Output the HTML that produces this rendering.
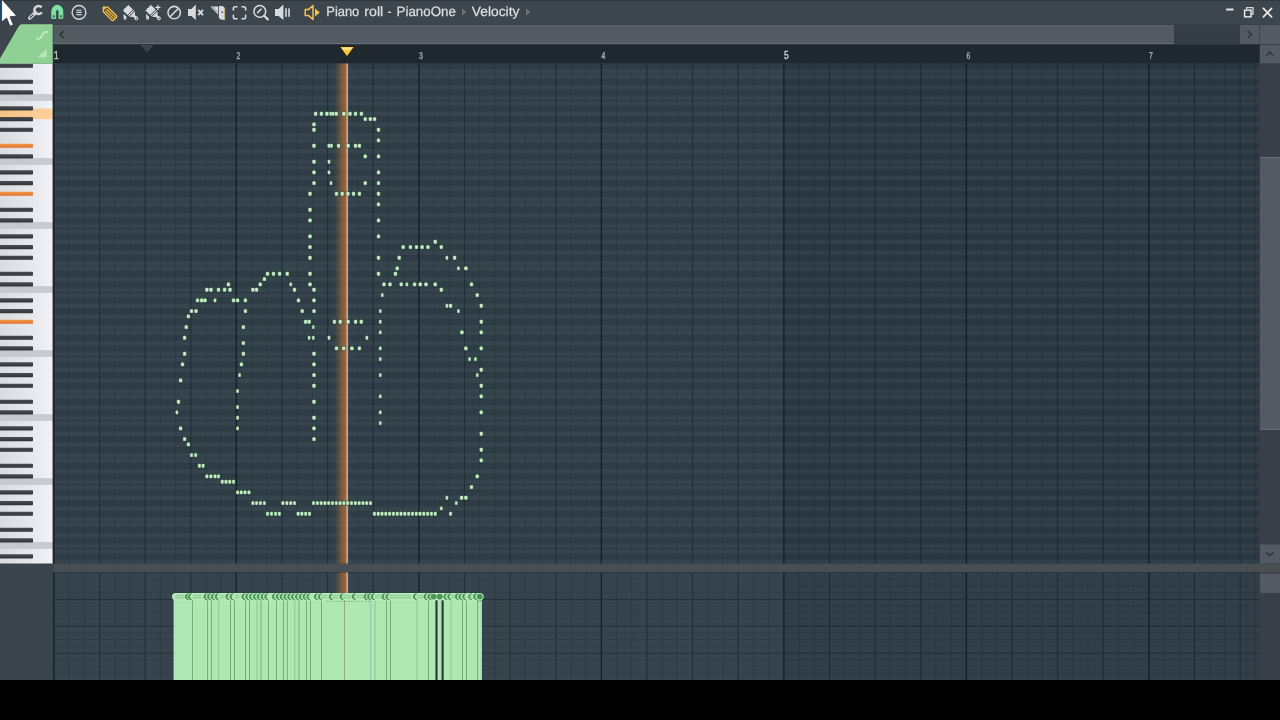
<!DOCTYPE html>
<html><head><meta charset="utf-8"><title>Piano roll - PianoOne</title>
<style>
html,body{margin:0;padding:0;background:#000;}
body{width:1280px;height:720px;position:relative;overflow:hidden;font-family:"Liberation Sans",sans-serif;}
svg{position:absolute;left:0;top:0;display:block;will-change:transform}
text{text-rendering:geometricPrecision}
.t{opacity:.999}
text{font-family:"Liberation Sans",sans-serif;}
</style></head><body>

<svg width="1280" height="720" viewBox="0 0 1280 720">
<defs>
<clipPath id="gc"><rect x="53.5" y="63.5" width="1206.0" height="500.0"/></clipPath>
<clipPath id="vc"><rect x="53.5" y="572.5" width="1206.0" height="107.5"/></clipPath>
<clipPath id="pc"><rect x="0" y="63.5" width="53.5" height="500.0"/></clipPath>
<linearGradient id="ph" x1="0" x2="1" y1="0" y2="0"><stop offset="0" stop-color="#a56a3c" stop-opacity="0"/><stop offset="0.15" stop-color="#a56a3c" stop-opacity="0.06"/><stop offset="0.42" stop-color="#a56a3c" stop-opacity="0.42"/><stop offset="0.6" stop-color="#a86a3a" stop-opacity="0.68"/><stop offset="0.88" stop-color="#b06c3a" stop-opacity="0.82"/><stop offset="0.895" stop-color="#d6a780" stop-opacity="1"/><stop offset="1" stop-color="#d6a780" stop-opacity="0.92"/></linearGradient>
<linearGradient id="wk" x1="0" x2="1" y1="0" y2="0"><stop offset="0" stop-color="#d9dbe0"/><stop offset="0.55" stop-color="#e6e7ec"/><stop offset="1" stop-color="#f2f3f7"/></linearGradient>
<linearGradient id="hk" x1="0" x2="1" y1="0" y2="0"><stop offset="0" stop-color="#f9c283"/><stop offset="1" stop-color="#fdd29c"/></linearGradient>
<linearGradient id="bk" x1="0" x2="0" y1="0" y2="1"><stop offset="0" stop-color="#4a4d52"/><stop offset="1" stop-color="#303338"/></linearGradient>
<linearGradient id="ok" x1="0" x2="0" y1="0" y2="1"><stop offset="0" stop-color="#f59a4a"/><stop offset="1" stop-color="#e0702a"/></linearGradient>
</defs>
<rect x="0" y="0" width="1280" height="680" fill="#3c444b"/>
<rect x="0" y="0" width="1280" height="24.5" fill="#3e464d"/>
<rect x="0" y="0" width="1280" height="1" fill="#2f363c"/>
<rect x="53.5" y="24.5" width="1227" height="20" fill="#353d44"/>
<rect x="0" y="24.5" width="53.5" height="39" fill="#3d454c"/>
<rect x="53.5" y="25" width="1120.5" height="19" fill="#535a61"/>
<rect x="53.5" y="25" width="1120.5" height="1" fill="#5a6168"/>
<rect x="53.5" y="43" width="1120.5" height="1.2" fill="#656c73"/>
<rect x="1240" y="25" width="19.3" height="19" fill="#535a61"/>
<rect x="1260" y="25" width="20" height="19" fill="#535a61"/>
<rect x="1260" y="45" width="20" height="18.5" fill="#535a61"/>
<rect x="53.5" y="44.5" width="1206" height="19" fill="#1f282e"/>
<rect x="1260" y="63.5" width="20" height="500" fill="#383f46"/>
<rect x="1260" y="157" width="20" height="273" fill="#535a61"/>
<rect x="1260" y="157" width="20" height="1" fill="#646b72"/>
<rect x="1260" y="429" width="20" height="1" fill="#646b72"/>
<rect x="1260" y="544.5" width="20" height="19" fill="#535a61"/>
<rect x="53.5" y="563.5" width="1226.5" height="9" fill="#484e52"/>
<rect x="0" y="563.5" width="53.5" height="9" fill="#3d454c"/>
<rect x="0" y="572.5" width="53.5" height="107.5" fill="#3c444b"/>
<rect x="1260" y="572.5" width="20" height="107.5" fill="#383f46"/>
<rect x="1260" y="573.5" width="20" height="19.5" fill="#535a61"/>
<rect x="0" y="680" width="1280" height="40" fill="#000"/>
<g shape-rendering="crispEdges">
<rect x="53.5" y="63.5" width="1206.0" height="500.0" fill="#36454d"/>
<rect x="53.5" y="572.5" width="1206.0" height="107.5" fill="#36454d"/>
</g>
<g clip-path="url(#gc)">
<rect x="53.5" y="63.10" width="1206.0" height="5.33" fill="#2e3c45"/>
<rect x="53.5" y="79.10" width="1206.0" height="5.33" fill="#2e3c45"/>
<rect x="53.5" y="89.77" width="1206.0" height="5.33" fill="#2e3c45"/>
<rect x="53.5" y="105.77" width="1206.0" height="5.33" fill="#2e3c45"/>
<rect x="53.5" y="116.43" width="1206.0" height="5.33" fill="#2e3c45"/>
<rect x="53.5" y="127.10" width="1206.0" height="5.33" fill="#2e3c45"/>
<rect x="53.5" y="143.10" width="1206.0" height="5.33" fill="#2e3c45"/>
<rect x="53.5" y="153.77" width="1206.0" height="5.33" fill="#2e3c45"/>
<rect x="53.5" y="169.77" width="1206.0" height="5.33" fill="#2e3c45"/>
<rect x="53.5" y="180.43" width="1206.0" height="5.33" fill="#2e3c45"/>
<rect x="53.5" y="191.10" width="1206.0" height="5.33" fill="#2e3c45"/>
<rect x="53.5" y="207.10" width="1206.0" height="5.33" fill="#2e3c45"/>
<rect x="53.5" y="217.77" width="1206.0" height="5.33" fill="#2e3c45"/>
<rect x="53.5" y="233.77" width="1206.0" height="5.33" fill="#2e3c45"/>
<rect x="53.5" y="244.43" width="1206.0" height="5.33" fill="#2e3c45"/>
<rect x="53.5" y="255.10" width="1206.0" height="5.33" fill="#2e3c45"/>
<rect x="53.5" y="271.10" width="1206.0" height="5.33" fill="#2e3c45"/>
<rect x="53.5" y="281.77" width="1206.0" height="5.33" fill="#2e3c45"/>
<rect x="53.5" y="297.77" width="1206.0" height="5.33" fill="#2e3c45"/>
<rect x="53.5" y="308.43" width="1206.0" height="5.33" fill="#2e3c45"/>
<rect x="53.5" y="319.10" width="1206.0" height="5.33" fill="#2e3c45"/>
<rect x="53.5" y="335.10" width="1206.0" height="5.33" fill="#2e3c45"/>
<rect x="53.5" y="345.77" width="1206.0" height="5.33" fill="#2e3c45"/>
<rect x="53.5" y="361.77" width="1206.0" height="5.33" fill="#2e3c45"/>
<rect x="53.5" y="372.43" width="1206.0" height="5.33" fill="#2e3c45"/>
<rect x="53.5" y="383.10" width="1206.0" height="5.33" fill="#2e3c45"/>
<rect x="53.5" y="399.10" width="1206.0" height="5.33" fill="#2e3c45"/>
<rect x="53.5" y="409.77" width="1206.0" height="5.33" fill="#2e3c45"/>
<rect x="53.5" y="425.77" width="1206.0" height="5.33" fill="#2e3c45"/>
<rect x="53.5" y="436.43" width="1206.0" height="5.33" fill="#2e3c45"/>
<rect x="53.5" y="447.10" width="1206.0" height="5.33" fill="#2e3c45"/>
<rect x="53.5" y="463.10" width="1206.0" height="5.33" fill="#2e3c45"/>
<rect x="53.5" y="473.77" width="1206.0" height="5.33" fill="#2e3c45"/>
<rect x="53.5" y="489.77" width="1206.0" height="5.33" fill="#2e3c45"/>
<rect x="53.5" y="500.43" width="1206.0" height="5.33" fill="#2e3c45"/>
<rect x="53.5" y="511.10" width="1206.0" height="5.33" fill="#2e3c45"/>
<rect x="53.5" y="527.10" width="1206.0" height="5.33" fill="#2e3c45"/>
<rect x="53.5" y="537.77" width="1206.0" height="5.33" fill="#2e3c45"/>
<rect x="53.5" y="553.77" width="1206.0" height="5.33" fill="#2e3c45"/>
<rect x="53.5" y="57.67" width="1206.0" height="0.9" fill="#2b3943" opacity="0.5"/>
<rect x="53.5" y="63.00" width="1206.0" height="0.9" fill="#2b3943" opacity="0.5"/>
<rect x="53.5" y="68.33" width="1206.0" height="0.9" fill="#2b3943" opacity="0.5"/>
<rect x="53.5" y="73.67" width="1206.0" height="0.9" fill="#2b3943" opacity="0.5"/>
<rect x="53.5" y="79.00" width="1206.0" height="0.9" fill="#2b3943" opacity="0.5"/>
<rect x="53.5" y="84.33" width="1206.0" height="0.9" fill="#2b3943" opacity="0.5"/>
<rect x="53.5" y="89.67" width="1206.0" height="0.9" fill="#2b3943" opacity="0.5"/>
<rect x="53.5" y="95.00" width="1206.0" height="0.9" fill="#2b3943" opacity="0.5"/>
<rect x="53.5" y="100.33" width="1206.0" height="0.9" fill="#212e37" opacity="0.6"/>
<rect x="53.5" y="105.67" width="1206.0" height="0.9" fill="#2b3943" opacity="0.5"/>
<rect x="53.5" y="111.00" width="1206.0" height="0.9" fill="#2b3943" opacity="0.5"/>
<rect x="53.5" y="116.33" width="1206.0" height="0.9" fill="#2b3943" opacity="0.5"/>
<rect x="53.5" y="121.67" width="1206.0" height="0.9" fill="#2b3943" opacity="0.5"/>
<rect x="53.5" y="127.00" width="1206.0" height="0.9" fill="#2b3943" opacity="0.5"/>
<rect x="53.5" y="132.33" width="1206.0" height="0.9" fill="#2b3943" opacity="0.5"/>
<rect x="53.5" y="137.67" width="1206.0" height="0.9" fill="#2b3943" opacity="0.5"/>
<rect x="53.5" y="143.00" width="1206.0" height="0.9" fill="#2b3943" opacity="0.5"/>
<rect x="53.5" y="148.33" width="1206.0" height="0.9" fill="#2b3943" opacity="0.5"/>
<rect x="53.5" y="153.67" width="1206.0" height="0.9" fill="#2b3943" opacity="0.5"/>
<rect x="53.5" y="159.00" width="1206.0" height="0.9" fill="#2b3943" opacity="0.5"/>
<rect x="53.5" y="164.33" width="1206.0" height="0.9" fill="#212e37" opacity="0.6"/>
<rect x="53.5" y="169.67" width="1206.0" height="0.9" fill="#2b3943" opacity="0.5"/>
<rect x="53.5" y="175.00" width="1206.0" height="0.9" fill="#2b3943" opacity="0.5"/>
<rect x="53.5" y="180.33" width="1206.0" height="0.9" fill="#2b3943" opacity="0.5"/>
<rect x="53.5" y="185.67" width="1206.0" height="0.9" fill="#2b3943" opacity="0.5"/>
<rect x="53.5" y="191.00" width="1206.0" height="0.9" fill="#2b3943" opacity="0.5"/>
<rect x="53.5" y="196.33" width="1206.0" height="0.9" fill="#2b3943" opacity="0.5"/>
<rect x="53.5" y="201.67" width="1206.0" height="0.9" fill="#2b3943" opacity="0.5"/>
<rect x="53.5" y="207.00" width="1206.0" height="0.9" fill="#2b3943" opacity="0.5"/>
<rect x="53.5" y="212.33" width="1206.0" height="0.9" fill="#2b3943" opacity="0.5"/>
<rect x="53.5" y="217.67" width="1206.0" height="0.9" fill="#2b3943" opacity="0.5"/>
<rect x="53.5" y="223.00" width="1206.0" height="0.9" fill="#2b3943" opacity="0.5"/>
<rect x="53.5" y="228.33" width="1206.0" height="0.9" fill="#212e37" opacity="0.6"/>
<rect x="53.5" y="233.67" width="1206.0" height="0.9" fill="#2b3943" opacity="0.5"/>
<rect x="53.5" y="239.00" width="1206.0" height="0.9" fill="#2b3943" opacity="0.5"/>
<rect x="53.5" y="244.33" width="1206.0" height="0.9" fill="#2b3943" opacity="0.5"/>
<rect x="53.5" y="249.67" width="1206.0" height="0.9" fill="#2b3943" opacity="0.5"/>
<rect x="53.5" y="255.00" width="1206.0" height="0.9" fill="#2b3943" opacity="0.5"/>
<rect x="53.5" y="260.33" width="1206.0" height="0.9" fill="#2b3943" opacity="0.5"/>
<rect x="53.5" y="265.67" width="1206.0" height="0.9" fill="#2b3943" opacity="0.5"/>
<rect x="53.5" y="271.00" width="1206.0" height="0.9" fill="#2b3943" opacity="0.5"/>
<rect x="53.5" y="276.33" width="1206.0" height="0.9" fill="#2b3943" opacity="0.5"/>
<rect x="53.5" y="281.67" width="1206.0" height="0.9" fill="#2b3943" opacity="0.5"/>
<rect x="53.5" y="287.00" width="1206.0" height="0.9" fill="#2b3943" opacity="0.5"/>
<rect x="53.5" y="292.33" width="1206.0" height="0.9" fill="#212e37" opacity="0.6"/>
<rect x="53.5" y="297.67" width="1206.0" height="0.9" fill="#2b3943" opacity="0.5"/>
<rect x="53.5" y="303.00" width="1206.0" height="0.9" fill="#2b3943" opacity="0.5"/>
<rect x="53.5" y="308.33" width="1206.0" height="0.9" fill="#2b3943" opacity="0.5"/>
<rect x="53.5" y="313.67" width="1206.0" height="0.9" fill="#2b3943" opacity="0.5"/>
<rect x="53.5" y="319.00" width="1206.0" height="0.9" fill="#2b3943" opacity="0.5"/>
<rect x="53.5" y="324.33" width="1206.0" height="0.9" fill="#2b3943" opacity="0.5"/>
<rect x="53.5" y="329.67" width="1206.0" height="0.9" fill="#2b3943" opacity="0.5"/>
<rect x="53.5" y="335.00" width="1206.0" height="0.9" fill="#2b3943" opacity="0.5"/>
<rect x="53.5" y="340.33" width="1206.0" height="0.9" fill="#2b3943" opacity="0.5"/>
<rect x="53.5" y="345.67" width="1206.0" height="0.9" fill="#2b3943" opacity="0.5"/>
<rect x="53.5" y="351.00" width="1206.0" height="0.9" fill="#2b3943" opacity="0.5"/>
<rect x="53.5" y="356.33" width="1206.0" height="0.9" fill="#212e37" opacity="0.6"/>
<rect x="53.5" y="361.67" width="1206.0" height="0.9" fill="#2b3943" opacity="0.5"/>
<rect x="53.5" y="367.00" width="1206.0" height="0.9" fill="#2b3943" opacity="0.5"/>
<rect x="53.5" y="372.33" width="1206.0" height="0.9" fill="#2b3943" opacity="0.5"/>
<rect x="53.5" y="377.67" width="1206.0" height="0.9" fill="#2b3943" opacity="0.5"/>
<rect x="53.5" y="383.00" width="1206.0" height="0.9" fill="#2b3943" opacity="0.5"/>
<rect x="53.5" y="388.33" width="1206.0" height="0.9" fill="#2b3943" opacity="0.5"/>
<rect x="53.5" y="393.67" width="1206.0" height="0.9" fill="#2b3943" opacity="0.5"/>
<rect x="53.5" y="399.00" width="1206.0" height="0.9" fill="#2b3943" opacity="0.5"/>
<rect x="53.5" y="404.33" width="1206.0" height="0.9" fill="#2b3943" opacity="0.5"/>
<rect x="53.5" y="409.67" width="1206.0" height="0.9" fill="#2b3943" opacity="0.5"/>
<rect x="53.5" y="415.00" width="1206.0" height="0.9" fill="#2b3943" opacity="0.5"/>
<rect x="53.5" y="420.33" width="1206.0" height="0.9" fill="#212e37" opacity="0.6"/>
<rect x="53.5" y="425.67" width="1206.0" height="0.9" fill="#2b3943" opacity="0.5"/>
<rect x="53.5" y="431.00" width="1206.0" height="0.9" fill="#2b3943" opacity="0.5"/>
<rect x="53.5" y="436.33" width="1206.0" height="0.9" fill="#2b3943" opacity="0.5"/>
<rect x="53.5" y="441.67" width="1206.0" height="0.9" fill="#2b3943" opacity="0.5"/>
<rect x="53.5" y="447.00" width="1206.0" height="0.9" fill="#2b3943" opacity="0.5"/>
<rect x="53.5" y="452.33" width="1206.0" height="0.9" fill="#2b3943" opacity="0.5"/>
<rect x="53.5" y="457.67" width="1206.0" height="0.9" fill="#2b3943" opacity="0.5"/>
<rect x="53.5" y="463.00" width="1206.0" height="0.9" fill="#2b3943" opacity="0.5"/>
<rect x="53.5" y="468.33" width="1206.0" height="0.9" fill="#2b3943" opacity="0.5"/>
<rect x="53.5" y="473.67" width="1206.0" height="0.9" fill="#2b3943" opacity="0.5"/>
<rect x="53.5" y="479.00" width="1206.0" height="0.9" fill="#2b3943" opacity="0.5"/>
<rect x="53.5" y="484.33" width="1206.0" height="0.9" fill="#212e37" opacity="0.6"/>
<rect x="53.5" y="489.67" width="1206.0" height="0.9" fill="#2b3943" opacity="0.5"/>
<rect x="53.5" y="495.00" width="1206.0" height="0.9" fill="#2b3943" opacity="0.5"/>
<rect x="53.5" y="500.33" width="1206.0" height="0.9" fill="#2b3943" opacity="0.5"/>
<rect x="53.5" y="505.67" width="1206.0" height="0.9" fill="#2b3943" opacity="0.5"/>
<rect x="53.5" y="511.00" width="1206.0" height="0.9" fill="#2b3943" opacity="0.5"/>
<rect x="53.5" y="516.33" width="1206.0" height="0.9" fill="#2b3943" opacity="0.5"/>
<rect x="53.5" y="521.67" width="1206.0" height="0.9" fill="#2b3943" opacity="0.5"/>
<rect x="53.5" y="527.00" width="1206.0" height="0.9" fill="#2b3943" opacity="0.5"/>
<rect x="53.5" y="532.33" width="1206.0" height="0.9" fill="#2b3943" opacity="0.5"/>
<rect x="53.5" y="537.67" width="1206.0" height="0.9" fill="#2b3943" opacity="0.5"/>
<rect x="53.5" y="543.00" width="1206.0" height="0.9" fill="#2b3943" opacity="0.5"/>
<rect x="53.5" y="548.33" width="1206.0" height="0.9" fill="#212e37" opacity="0.6"/>
<rect x="53.5" y="553.67" width="1206.0" height="0.9" fill="#2b3943" opacity="0.5"/>
<rect x="53.5" y="559.00" width="1206.0" height="0.9" fill="#2b3943" opacity="0.5"/>
</g>
<rect x="53.15" y="63.5" width="1.4" height="500.0" fill="#17212a" opacity="1"/>
<rect x="68.56" y="63.5" width="1" height="500.0" fill="#283540" opacity="0.55"/>
<rect x="83.77" y="63.5" width="1" height="500.0" fill="#283540" opacity="0.55"/>
<rect x="98.92" y="63.5" width="1.1" height="500.0" fill="#212d36" opacity="0.95"/>
<rect x="114.18" y="63.5" width="1" height="500.0" fill="#283540" opacity="0.55"/>
<rect x="129.39" y="63.5" width="1" height="500.0" fill="#283540" opacity="0.55"/>
<rect x="144.55" y="63.5" width="1.1" height="500.0" fill="#212d36" opacity="0.95"/>
<rect x="159.81" y="63.5" width="1" height="500.0" fill="#283540" opacity="0.55"/>
<rect x="175.02" y="63.5" width="1" height="500.0" fill="#283540" opacity="0.55"/>
<rect x="190.17" y="63.5" width="1.1" height="500.0" fill="#212d36" opacity="0.95"/>
<rect x="205.43" y="63.5" width="1" height="500.0" fill="#283540" opacity="0.55"/>
<rect x="220.64" y="63.5" width="1" height="500.0" fill="#283540" opacity="0.55"/>
<rect x="235.65" y="63.5" width="1.4" height="500.0" fill="#17212a" opacity="1"/>
<rect x="251.06" y="63.5" width="1" height="500.0" fill="#283540" opacity="0.55"/>
<rect x="266.27" y="63.5" width="1" height="500.0" fill="#283540" opacity="0.55"/>
<rect x="281.43" y="63.5" width="1.1" height="500.0" fill="#212d36" opacity="0.95"/>
<rect x="296.68" y="63.5" width="1" height="500.0" fill="#283540" opacity="0.55"/>
<rect x="311.89" y="63.5" width="1" height="500.0" fill="#283540" opacity="0.55"/>
<rect x="327.05" y="63.5" width="1.1" height="500.0" fill="#212d36" opacity="0.95"/>
<rect x="342.31" y="63.5" width="1" height="500.0" fill="#283540" opacity="0.55"/>
<rect x="357.52" y="63.5" width="1" height="500.0" fill="#283540" opacity="0.55"/>
<rect x="372.68" y="63.5" width="1.1" height="500.0" fill="#212d36" opacity="0.95"/>
<rect x="387.93" y="63.5" width="1" height="500.0" fill="#283540" opacity="0.55"/>
<rect x="403.14" y="63.5" width="1" height="500.0" fill="#283540" opacity="0.55"/>
<rect x="418.15" y="63.5" width="1.4" height="500.0" fill="#17212a" opacity="1"/>
<rect x="433.56" y="63.5" width="1" height="500.0" fill="#283540" opacity="0.55"/>
<rect x="448.77" y="63.5" width="1" height="500.0" fill="#283540" opacity="0.55"/>
<rect x="463.93" y="63.5" width="1.1" height="500.0" fill="#212d36" opacity="0.95"/>
<rect x="479.18" y="63.5" width="1" height="500.0" fill="#283540" opacity="0.55"/>
<rect x="494.39" y="63.5" width="1" height="500.0" fill="#283540" opacity="0.55"/>
<rect x="509.55" y="63.5" width="1.1" height="500.0" fill="#212d36" opacity="0.95"/>
<rect x="524.81" y="63.5" width="1" height="500.0" fill="#283540" opacity="0.55"/>
<rect x="540.02" y="63.5" width="1" height="500.0" fill="#283540" opacity="0.55"/>
<rect x="555.18" y="63.5" width="1.1" height="500.0" fill="#212d36" opacity="0.95"/>
<rect x="570.43" y="63.5" width="1" height="500.0" fill="#283540" opacity="0.55"/>
<rect x="585.64" y="63.5" width="1" height="500.0" fill="#283540" opacity="0.55"/>
<rect x="600.65" y="63.5" width="1.4" height="500.0" fill="#17212a" opacity="1"/>
<rect x="616.06" y="63.5" width="1" height="500.0" fill="#283540" opacity="0.55"/>
<rect x="631.27" y="63.5" width="1" height="500.0" fill="#283540" opacity="0.55"/>
<rect x="646.43" y="63.5" width="1.1" height="500.0" fill="#212d36" opacity="0.95"/>
<rect x="661.68" y="63.5" width="1" height="500.0" fill="#283540" opacity="0.55"/>
<rect x="676.89" y="63.5" width="1" height="500.0" fill="#283540" opacity="0.55"/>
<rect x="692.05" y="63.5" width="1.1" height="500.0" fill="#212d36" opacity="0.95"/>
<rect x="707.31" y="63.5" width="1" height="500.0" fill="#283540" opacity="0.55"/>
<rect x="722.52" y="63.5" width="1" height="500.0" fill="#283540" opacity="0.55"/>
<rect x="737.68" y="63.5" width="1.1" height="500.0" fill="#212d36" opacity="0.95"/>
<rect x="752.93" y="63.5" width="1" height="500.0" fill="#283540" opacity="0.55"/>
<rect x="768.14" y="63.5" width="1" height="500.0" fill="#283540" opacity="0.55"/>
<rect x="783.15" y="63.5" width="1.4" height="500.0" fill="#17212a" opacity="1"/>
<rect x="798.56" y="63.5" width="1" height="500.0" fill="#283540" opacity="0.55"/>
<rect x="813.77" y="63.5" width="1" height="500.0" fill="#283540" opacity="0.55"/>
<rect x="828.93" y="63.5" width="1.1" height="500.0" fill="#212d36" opacity="0.95"/>
<rect x="844.18" y="63.5" width="1" height="500.0" fill="#283540" opacity="0.55"/>
<rect x="859.39" y="63.5" width="1" height="500.0" fill="#283540" opacity="0.55"/>
<rect x="874.55" y="63.5" width="1.1" height="500.0" fill="#212d36" opacity="0.95"/>
<rect x="889.81" y="63.5" width="1" height="500.0" fill="#283540" opacity="0.55"/>
<rect x="905.02" y="63.5" width="1" height="500.0" fill="#283540" opacity="0.55"/>
<rect x="920.18" y="63.5" width="1.1" height="500.0" fill="#212d36" opacity="0.95"/>
<rect x="935.43" y="63.5" width="1" height="500.0" fill="#283540" opacity="0.55"/>
<rect x="950.64" y="63.5" width="1" height="500.0" fill="#283540" opacity="0.55"/>
<rect x="965.65" y="63.5" width="1.4" height="500.0" fill="#17212a" opacity="1"/>
<rect x="981.06" y="63.5" width="1" height="500.0" fill="#283540" opacity="0.55"/>
<rect x="996.27" y="63.5" width="1" height="500.0" fill="#283540" opacity="0.55"/>
<rect x="1011.43" y="63.5" width="1.1" height="500.0" fill="#212d36" opacity="0.95"/>
<rect x="1026.68" y="63.5" width="1" height="500.0" fill="#283540" opacity="0.55"/>
<rect x="1041.89" y="63.5" width="1" height="500.0" fill="#283540" opacity="0.55"/>
<rect x="1057.05" y="63.5" width="1.1" height="500.0" fill="#212d36" opacity="0.95"/>
<rect x="1072.31" y="63.5" width="1" height="500.0" fill="#283540" opacity="0.55"/>
<rect x="1087.52" y="63.5" width="1" height="500.0" fill="#283540" opacity="0.55"/>
<rect x="1102.67" y="63.5" width="1.1" height="500.0" fill="#212d36" opacity="0.95"/>
<rect x="1117.93" y="63.5" width="1" height="500.0" fill="#283540" opacity="0.55"/>
<rect x="1133.14" y="63.5" width="1" height="500.0" fill="#283540" opacity="0.55"/>
<rect x="1148.15" y="63.5" width="1.4" height="500.0" fill="#17212a" opacity="1"/>
<rect x="1163.56" y="63.5" width="1" height="500.0" fill="#283540" opacity="0.55"/>
<rect x="1178.77" y="63.5" width="1" height="500.0" fill="#283540" opacity="0.55"/>
<rect x="1193.92" y="63.5" width="1.1" height="500.0" fill="#212d36" opacity="0.95"/>
<rect x="1209.18" y="63.5" width="1" height="500.0" fill="#283540" opacity="0.55"/>
<rect x="1224.39" y="63.5" width="1" height="500.0" fill="#283540" opacity="0.55"/>
<rect x="1239.55" y="63.5" width="1.1" height="500.0" fill="#212d36" opacity="0.95"/>
<rect x="1254.81" y="63.5" width="1" height="500.0" fill="#283540" opacity="0.55"/>
<rect x="53.15" y="572.5" width="1.4" height="107.5" fill="#17212a" opacity="1"/>
<rect x="68.56" y="572.5" width="1" height="107.5" fill="#283540" opacity="0.55"/>
<rect x="83.77" y="572.5" width="1" height="107.5" fill="#283540" opacity="0.55"/>
<rect x="98.92" y="572.5" width="1.1" height="107.5" fill="#212d36" opacity="0.95"/>
<rect x="114.18" y="572.5" width="1" height="107.5" fill="#283540" opacity="0.55"/>
<rect x="129.39" y="572.5" width="1" height="107.5" fill="#283540" opacity="0.55"/>
<rect x="144.55" y="572.5" width="1.1" height="107.5" fill="#212d36" opacity="0.95"/>
<rect x="159.81" y="572.5" width="1" height="107.5" fill="#283540" opacity="0.55"/>
<rect x="175.02" y="572.5" width="1" height="107.5" fill="#283540" opacity="0.55"/>
<rect x="190.17" y="572.5" width="1.1" height="107.5" fill="#212d36" opacity="0.95"/>
<rect x="205.43" y="572.5" width="1" height="107.5" fill="#283540" opacity="0.55"/>
<rect x="220.64" y="572.5" width="1" height="107.5" fill="#283540" opacity="0.55"/>
<rect x="235.65" y="572.5" width="1.4" height="107.5" fill="#17212a" opacity="1"/>
<rect x="251.06" y="572.5" width="1" height="107.5" fill="#283540" opacity="0.55"/>
<rect x="266.27" y="572.5" width="1" height="107.5" fill="#283540" opacity="0.55"/>
<rect x="281.43" y="572.5" width="1.1" height="107.5" fill="#212d36" opacity="0.95"/>
<rect x="296.68" y="572.5" width="1" height="107.5" fill="#283540" opacity="0.55"/>
<rect x="311.89" y="572.5" width="1" height="107.5" fill="#283540" opacity="0.55"/>
<rect x="327.05" y="572.5" width="1.1" height="107.5" fill="#212d36" opacity="0.95"/>
<rect x="342.31" y="572.5" width="1" height="107.5" fill="#283540" opacity="0.55"/>
<rect x="357.52" y="572.5" width="1" height="107.5" fill="#283540" opacity="0.55"/>
<rect x="372.68" y="572.5" width="1.1" height="107.5" fill="#212d36" opacity="0.95"/>
<rect x="387.93" y="572.5" width="1" height="107.5" fill="#283540" opacity="0.55"/>
<rect x="403.14" y="572.5" width="1" height="107.5" fill="#283540" opacity="0.55"/>
<rect x="418.15" y="572.5" width="1.4" height="107.5" fill="#17212a" opacity="1"/>
<rect x="433.56" y="572.5" width="1" height="107.5" fill="#283540" opacity="0.55"/>
<rect x="448.77" y="572.5" width="1" height="107.5" fill="#283540" opacity="0.55"/>
<rect x="463.93" y="572.5" width="1.1" height="107.5" fill="#212d36" opacity="0.95"/>
<rect x="479.18" y="572.5" width="1" height="107.5" fill="#283540" opacity="0.55"/>
<rect x="494.39" y="572.5" width="1" height="107.5" fill="#283540" opacity="0.55"/>
<rect x="509.55" y="572.5" width="1.1" height="107.5" fill="#212d36" opacity="0.95"/>
<rect x="524.81" y="572.5" width="1" height="107.5" fill="#283540" opacity="0.55"/>
<rect x="540.02" y="572.5" width="1" height="107.5" fill="#283540" opacity="0.55"/>
<rect x="555.18" y="572.5" width="1.1" height="107.5" fill="#212d36" opacity="0.95"/>
<rect x="570.43" y="572.5" width="1" height="107.5" fill="#283540" opacity="0.55"/>
<rect x="585.64" y="572.5" width="1" height="107.5" fill="#283540" opacity="0.55"/>
<rect x="600.65" y="572.5" width="1.4" height="107.5" fill="#17212a" opacity="1"/>
<rect x="616.06" y="572.5" width="1" height="107.5" fill="#283540" opacity="0.55"/>
<rect x="631.27" y="572.5" width="1" height="107.5" fill="#283540" opacity="0.55"/>
<rect x="646.43" y="572.5" width="1.1" height="107.5" fill="#212d36" opacity="0.95"/>
<rect x="661.68" y="572.5" width="1" height="107.5" fill="#283540" opacity="0.55"/>
<rect x="676.89" y="572.5" width="1" height="107.5" fill="#283540" opacity="0.55"/>
<rect x="692.05" y="572.5" width="1.1" height="107.5" fill="#212d36" opacity="0.95"/>
<rect x="707.31" y="572.5" width="1" height="107.5" fill="#283540" opacity="0.55"/>
<rect x="722.52" y="572.5" width="1" height="107.5" fill="#283540" opacity="0.55"/>
<rect x="737.68" y="572.5" width="1.1" height="107.5" fill="#212d36" opacity="0.95"/>
<rect x="752.93" y="572.5" width="1" height="107.5" fill="#283540" opacity="0.55"/>
<rect x="768.14" y="572.5" width="1" height="107.5" fill="#283540" opacity="0.55"/>
<rect x="783.15" y="572.5" width="1.4" height="107.5" fill="#17212a" opacity="1"/>
<rect x="798.56" y="572.5" width="1" height="107.5" fill="#283540" opacity="0.55"/>
<rect x="813.77" y="572.5" width="1" height="107.5" fill="#283540" opacity="0.55"/>
<rect x="828.93" y="572.5" width="1.1" height="107.5" fill="#212d36" opacity="0.95"/>
<rect x="844.18" y="572.5" width="1" height="107.5" fill="#283540" opacity="0.55"/>
<rect x="859.39" y="572.5" width="1" height="107.5" fill="#283540" opacity="0.55"/>
<rect x="874.55" y="572.5" width="1.1" height="107.5" fill="#212d36" opacity="0.95"/>
<rect x="889.81" y="572.5" width="1" height="107.5" fill="#283540" opacity="0.55"/>
<rect x="905.02" y="572.5" width="1" height="107.5" fill="#283540" opacity="0.55"/>
<rect x="920.18" y="572.5" width="1.1" height="107.5" fill="#212d36" opacity="0.95"/>
<rect x="935.43" y="572.5" width="1" height="107.5" fill="#283540" opacity="0.55"/>
<rect x="950.64" y="572.5" width="1" height="107.5" fill="#283540" opacity="0.55"/>
<rect x="965.65" y="572.5" width="1.4" height="107.5" fill="#17212a" opacity="1"/>
<rect x="981.06" y="572.5" width="1" height="107.5" fill="#283540" opacity="0.55"/>
<rect x="996.27" y="572.5" width="1" height="107.5" fill="#283540" opacity="0.55"/>
<rect x="1011.43" y="572.5" width="1.1" height="107.5" fill="#212d36" opacity="0.95"/>
<rect x="1026.68" y="572.5" width="1" height="107.5" fill="#283540" opacity="0.55"/>
<rect x="1041.89" y="572.5" width="1" height="107.5" fill="#283540" opacity="0.55"/>
<rect x="1057.05" y="572.5" width="1.1" height="107.5" fill="#212d36" opacity="0.95"/>
<rect x="1072.31" y="572.5" width="1" height="107.5" fill="#283540" opacity="0.55"/>
<rect x="1087.52" y="572.5" width="1" height="107.5" fill="#283540" opacity="0.55"/>
<rect x="1102.67" y="572.5" width="1.1" height="107.5" fill="#212d36" opacity="0.95"/>
<rect x="1117.93" y="572.5" width="1" height="107.5" fill="#283540" opacity="0.55"/>
<rect x="1133.14" y="572.5" width="1" height="107.5" fill="#283540" opacity="0.55"/>
<rect x="1148.15" y="572.5" width="1.4" height="107.5" fill="#17212a" opacity="1"/>
<rect x="1163.56" y="572.5" width="1" height="107.5" fill="#283540" opacity="0.55"/>
<rect x="1178.77" y="572.5" width="1" height="107.5" fill="#283540" opacity="0.55"/>
<rect x="1193.92" y="572.5" width="1.1" height="107.5" fill="#212d36" opacity="0.95"/>
<rect x="1209.18" y="572.5" width="1" height="107.5" fill="#283540" opacity="0.55"/>
<rect x="1224.39" y="572.5" width="1" height="107.5" fill="#283540" opacity="0.55"/>
<rect x="1239.55" y="572.5" width="1.1" height="107.5" fill="#212d36" opacity="0.95"/>
<rect x="1254.81" y="572.5" width="1" height="107.5" fill="#283540" opacity="0.55"/>
<rect x="53.5" y="578.82" width="1206.0" height="0.8" fill="#2a3741" opacity="0.55"/>
<rect x="53.5" y="585.54" width="1206.0" height="0.8" fill="#2a3741" opacity="0.55"/>
<rect x="53.5" y="592.26" width="1206.0" height="0.8" fill="#2a3741" opacity="0.55"/>
<rect x="53.5" y="598.88" width="1206.0" height="1" fill="#222f38" opacity="0.9"/>
<rect x="53.5" y="605.69" width="1206.0" height="0.8" fill="#2a3741" opacity="0.55"/>
<rect x="53.5" y="612.41" width="1206.0" height="0.8" fill="#2a3741" opacity="0.55"/>
<rect x="53.5" y="619.13" width="1206.0" height="0.8" fill="#2a3741" opacity="0.55"/>
<rect x="53.5" y="625.75" width="1206.0" height="1" fill="#222f38" opacity="0.9"/>
<rect x="53.5" y="632.57" width="1206.0" height="0.8" fill="#2a3741" opacity="0.55"/>
<rect x="53.5" y="639.29" width="1206.0" height="0.8" fill="#2a3741" opacity="0.55"/>
<rect x="53.5" y="646.01" width="1206.0" height="0.8" fill="#2a3741" opacity="0.55"/>
<rect x="53.5" y="652.62" width="1206.0" height="1" fill="#222f38" opacity="0.9"/>
<rect x="53.5" y="659.44" width="1206.0" height="0.8" fill="#2a3741" opacity="0.55"/>
<rect x="53.5" y="666.16" width="1206.0" height="0.8" fill="#2a3741" opacity="0.55"/>
<rect x="53.5" y="672.88" width="1206.0" height="0.8" fill="#2a3741" opacity="0.55"/>
<rect x="783.85" y="63.5" width="475.65" height="500.0" fill="#0c1a24" opacity="0.13"/>
<rect x="783.85" y="572.5" width="475.65" height="107.5" fill="#0c1a24" opacity="0.13"/>
<rect x="52.9" y="572.5" width="1.2" height="107.5" fill="#1c262d"/>
<rect x="53.5" y="572.2" width="1206.0" height="0.9" fill="#27333c"/>
<rect x="0" y="63.5" width="53" height="500.0" fill="url(#wk)"/>
<g clip-path="url(#pc)">
<rect x="0" y="94.10" width="53" height="6.83" fill="#c3c6cb" opacity="0.9"/>
<rect x="0" y="158.10" width="53" height="6.83" fill="#c3c6cb" opacity="0.9"/>
<rect x="0" y="222.10" width="53" height="6.83" fill="#c3c6cb" opacity="0.9"/>
<rect x="0" y="286.10" width="53" height="6.83" fill="#c3c6cb" opacity="0.9"/>
<rect x="0" y="350.10" width="53" height="6.83" fill="#c3c6cb" opacity="0.9"/>
<rect x="0" y="414.10" width="53" height="6.83" fill="#c3c6cb" opacity="0.9"/>
<rect x="0" y="478.10" width="53" height="6.83" fill="#c3c6cb" opacity="0.9"/>
<rect x="0" y="542.10" width="53" height="6.83" fill="#c3c6cb" opacity="0.9"/>
<rect x="0" y="108.43" width="53" height="10.67" fill="url(#hk)"/>
<rect x="-1" y="63.67" width="34" height="4.2" rx="0.8" fill="url(#bk)"/>
<rect x="-1" y="79.67" width="34" height="4.2" rx="0.8" fill="url(#bk)"/>
<rect x="-1" y="90.33" width="34" height="4.2" rx="0.8" fill="url(#bk)"/>
<rect x="-1" y="106.33" width="34" height="4.2" rx="0.8" fill="url(#bk)"/>
<rect x="-1" y="117.00" width="34" height="4.2" rx="0.8" fill="url(#bk)"/>
<rect x="-1" y="127.67" width="34" height="4.2" rx="0.8" fill="url(#bk)"/>
<rect x="-1" y="143.67" width="34" height="4.2" rx="0.8" fill="url(#ok)"/>
<rect x="-1" y="154.33" width="34" height="4.2" rx="0.8" fill="url(#bk)"/>
<rect x="-1" y="170.33" width="34" height="4.2" rx="0.8" fill="url(#bk)"/>
<rect x="-1" y="181.00" width="34" height="4.2" rx="0.8" fill="url(#bk)"/>
<rect x="-1" y="191.67" width="34" height="4.2" rx="0.8" fill="url(#ok)"/>
<rect x="-1" y="207.67" width="34" height="4.2" rx="0.8" fill="url(#bk)"/>
<rect x="-1" y="218.33" width="34" height="4.2" rx="0.8" fill="url(#bk)"/>
<rect x="-1" y="234.33" width="34" height="4.2" rx="0.8" fill="url(#bk)"/>
<rect x="-1" y="245.00" width="34" height="4.2" rx="0.8" fill="url(#bk)"/>
<rect x="-1" y="255.67" width="34" height="4.2" rx="0.8" fill="url(#bk)"/>
<rect x="-1" y="271.67" width="34" height="4.2" rx="0.8" fill="url(#bk)"/>
<rect x="-1" y="282.33" width="34" height="4.2" rx="0.8" fill="url(#bk)"/>
<rect x="-1" y="298.33" width="34" height="4.2" rx="0.8" fill="url(#bk)"/>
<rect x="-1" y="309.00" width="34" height="4.2" rx="0.8" fill="url(#bk)"/>
<rect x="-1" y="319.67" width="34" height="4.2" rx="0.8" fill="url(#ok)"/>
<rect x="-1" y="335.67" width="34" height="4.2" rx="0.8" fill="url(#bk)"/>
<rect x="-1" y="346.33" width="34" height="4.2" rx="0.8" fill="url(#bk)"/>
<rect x="-1" y="362.33" width="34" height="4.2" rx="0.8" fill="url(#bk)"/>
<rect x="-1" y="373.00" width="34" height="4.2" rx="0.8" fill="url(#bk)"/>
<rect x="-1" y="383.67" width="34" height="4.2" rx="0.8" fill="url(#bk)"/>
<rect x="-1" y="399.67" width="34" height="4.2" rx="0.8" fill="url(#bk)"/>
<rect x="-1" y="410.33" width="34" height="4.2" rx="0.8" fill="url(#bk)"/>
<rect x="-1" y="426.33" width="34" height="4.2" rx="0.8" fill="url(#bk)"/>
<rect x="-1" y="437.00" width="34" height="4.2" rx="0.8" fill="url(#bk)"/>
<rect x="-1" y="447.67" width="34" height="4.2" rx="0.8" fill="url(#bk)"/>
<rect x="-1" y="463.67" width="34" height="4.2" rx="0.8" fill="url(#bk)"/>
<rect x="-1" y="474.33" width="34" height="4.2" rx="0.8" fill="url(#bk)"/>
<rect x="-1" y="490.33" width="34" height="4.2" rx="0.8" fill="url(#bk)"/>
<rect x="-1" y="501.00" width="34" height="4.2" rx="0.8" fill="url(#bk)"/>
<rect x="-1" y="511.67" width="34" height="4.2" rx="0.8" fill="url(#bk)"/>
<rect x="-1" y="527.67" width="34" height="4.2" rx="0.8" fill="url(#bk)"/>
<rect x="-1" y="538.33" width="34" height="4.2" rx="0.8" fill="url(#bk)"/>
<rect x="-1" y="554.33" width="34" height="4.2" rx="0.8" fill="url(#bk)"/>
</g>
<rect x="52.6" y="63.5" width="1" height="500" fill="#20292f"/>
<rect x="333.5" y="63.5" width="14.6" height="500.0" fill="url(#ph)"/>
<rect x="333.5" y="572.5" width="14.6" height="21" fill="url(#ph)"/>
<g>
<rect x="313.55" y="111.35" width="4.10" height="4.73" rx="0.8" fill="#1c2f27" opacity="0.7"/>
<rect x="319.35" y="111.35" width="4.10" height="4.73" rx="0.8" fill="#1c2f27" opacity="0.7"/>
<rect x="324.85" y="111.35" width="4.10" height="4.73" rx="0.8" fill="#1c2f27" opacity="0.7"/>
<rect x="334.25" y="111.35" width="4.10" height="4.73" rx="0.8" fill="#1c2f27" opacity="0.7"/>
<rect x="341.85" y="111.35" width="4.10" height="4.73" rx="0.8" fill="#1c2f27" opacity="0.7"/>
<rect x="347.95" y="111.35" width="4.10" height="4.73" rx="0.8" fill="#1c2f27" opacity="0.7"/>
<rect x="353.45" y="111.35" width="4.10" height="4.73" rx="0.8" fill="#1c2f27" opacity="0.7"/>
<rect x="359.35" y="111.35" width="4.10" height="4.73" rx="0.8" fill="#1c2f27" opacity="0.7"/>
<rect x="329.05" y="111.35" width="3.30" height="4.73" rx="0.8" fill="#1c2f27" opacity="0.7"/>
<rect x="331.35" y="111.35" width="3.30" height="4.73" rx="0.8" fill="#1c2f27" opacity="0.7"/>
<rect x="363.25" y="116.68" width="4.10" height="4.73" rx="0.8" fill="#1c2f27" opacity="0.7"/>
<rect x="368.25" y="116.68" width="4.10" height="4.73" rx="0.8" fill="#1c2f27" opacity="0.7"/>
<rect x="372.55" y="116.68" width="4.10" height="4.73" rx="0.8" fill="#1c2f27" opacity="0.7"/>
<rect x="311.95" y="122.02" width="4.10" height="4.73" rx="0.8" fill="#1c2f27" opacity="0.7"/>
<rect x="311.95" y="127.35" width="4.10" height="4.73" rx="0.8" fill="#1c2f27" opacity="0.7"/>
<rect x="376.45" y="127.35" width="4.10" height="4.73" rx="0.8" fill="#1c2f27" opacity="0.7"/>
<rect x="376.45" y="138.02" width="4.10" height="4.73" rx="0.8" fill="#1c2f27" opacity="0.7"/>
<rect x="311.95" y="143.35" width="4.10" height="4.73" rx="0.8" fill="#1c2f27" opacity="0.7"/>
<rect x="336.55" y="143.35" width="4.10" height="4.73" rx="0.8" fill="#1c2f27" opacity="0.7"/>
<rect x="346.05" y="143.35" width="4.10" height="4.73" rx="0.8" fill="#1c2f27" opacity="0.7"/>
<rect x="353.45" y="143.35" width="4.10" height="4.73" rx="0.8" fill="#1c2f27" opacity="0.7"/>
<rect x="357.35" y="143.35" width="4.10" height="4.73" rx="0.8" fill="#1c2f27" opacity="0.7"/>
<rect x="327.15" y="143.35" width="3.50" height="4.73" rx="0.8" fill="#1c2f27" opacity="0.7"/>
<rect x="329.65" y="143.35" width="3.50" height="4.73" rx="0.8" fill="#1c2f27" opacity="0.7"/>
<rect x="363.20" y="154.02" width="4.10" height="4.73" rx="0.8" fill="#1c2f27" opacity="0.7"/>
<rect x="376.45" y="154.02" width="4.10" height="4.73" rx="0.8" fill="#1c2f27" opacity="0.7"/>
<rect x="311.95" y="159.35" width="4.10" height="4.73" rx="0.8" fill="#1c2f27" opacity="0.7"/>
<rect x="327.30" y="159.35" width="3.40" height="4.73" rx="0.8" fill="#1c2f27" opacity="0.7"/>
<rect x="311.95" y="170.02" width="4.10" height="4.73" rx="0.8" fill="#1c2f27" opacity="0.7"/>
<rect x="327.30" y="170.02" width="3.40" height="4.73" rx="0.8" fill="#1c2f27" opacity="0.7"/>
<rect x="376.45" y="170.02" width="4.10" height="4.73" rx="0.8" fill="#1c2f27" opacity="0.7"/>
<rect x="311.95" y="180.68" width="4.10" height="4.73" rx="0.8" fill="#1c2f27" opacity="0.7"/>
<rect x="329.30" y="180.68" width="3.40" height="4.73" rx="0.8" fill="#1c2f27" opacity="0.7"/>
<rect x="363.20" y="180.68" width="4.10" height="4.73" rx="0.8" fill="#1c2f27" opacity="0.7"/>
<rect x="376.45" y="180.68" width="4.10" height="4.73" rx="0.8" fill="#1c2f27" opacity="0.7"/>
<rect x="307.95" y="191.35" width="4.10" height="4.73" rx="0.8" fill="#1c2f27" opacity="0.7"/>
<rect x="334.45" y="191.35" width="4.10" height="4.73" rx="0.8" fill="#1c2f27" opacity="0.7"/>
<rect x="340.20" y="191.35" width="4.10" height="4.73" rx="0.8" fill="#1c2f27" opacity="0.7"/>
<rect x="345.85" y="191.35" width="4.10" height="4.73" rx="0.8" fill="#1c2f27" opacity="0.7"/>
<rect x="351.45" y="191.35" width="4.10" height="4.73" rx="0.8" fill="#1c2f27" opacity="0.7"/>
<rect x="357.35" y="191.35" width="4.10" height="4.73" rx="0.8" fill="#1c2f27" opacity="0.7"/>
<rect x="376.45" y="191.35" width="4.10" height="4.73" rx="0.8" fill="#1c2f27" opacity="0.7"/>
<rect x="376.45" y="202.02" width="4.10" height="4.73" rx="0.8" fill="#1c2f27" opacity="0.7"/>
<rect x="307.95" y="207.35" width="4.10" height="4.73" rx="0.8" fill="#1c2f27" opacity="0.7"/>
<rect x="307.95" y="218.02" width="4.10" height="4.73" rx="0.8" fill="#1c2f27" opacity="0.7"/>
<rect x="376.45" y="218.02" width="4.10" height="4.73" rx="0.8" fill="#1c2f27" opacity="0.7"/>
<rect x="307.95" y="234.02" width="4.10" height="4.73" rx="0.8" fill="#1c2f27" opacity="0.7"/>
<rect x="376.45" y="234.02" width="4.10" height="4.73" rx="0.8" fill="#1c2f27" opacity="0.7"/>
<rect x="433.20" y="239.35" width="4.10" height="4.73" rx="0.8" fill="#1c2f27" opacity="0.7"/>
<rect x="307.95" y="244.68" width="4.10" height="4.73" rx="0.8" fill="#1c2f27" opacity="0.7"/>
<rect x="401.15" y="244.68" width="4.10" height="4.73" rx="0.8" fill="#1c2f27" opacity="0.7"/>
<rect x="408.35" y="244.68" width="4.10" height="4.73" rx="0.8" fill="#1c2f27" opacity="0.7"/>
<rect x="414.45" y="244.68" width="4.10" height="4.73" rx="0.8" fill="#1c2f27" opacity="0.7"/>
<rect x="420.05" y="244.68" width="4.10" height="4.73" rx="0.8" fill="#1c2f27" opacity="0.7"/>
<rect x="425.85" y="244.68" width="4.10" height="4.73" rx="0.8" fill="#1c2f27" opacity="0.7"/>
<rect x="439.25" y="244.68" width="4.10" height="4.73" rx="0.8" fill="#1c2f27" opacity="0.7"/>
<rect x="307.95" y="255.35" width="4.10" height="4.73" rx="0.8" fill="#1c2f27" opacity="0.7"/>
<rect x="376.45" y="255.35" width="4.10" height="4.73" rx="0.8" fill="#1c2f27" opacity="0.7"/>
<rect x="397.15" y="255.35" width="4.10" height="4.73" rx="0.8" fill="#1c2f27" opacity="0.7"/>
<rect x="445.20" y="255.35" width="3.40" height="4.73" rx="0.8" fill="#1c2f27" opacity="0.7"/>
<rect x="452.55" y="255.35" width="4.10" height="4.73" rx="0.8" fill="#1c2f27" opacity="0.7"/>
<rect x="395.20" y="266.02" width="4.10" height="4.73" rx="0.8" fill="#1c2f27" opacity="0.7"/>
<rect x="456.70" y="266.02" width="3.40" height="4.73" rx="0.8" fill="#1c2f27" opacity="0.7"/>
<rect x="463.85" y="266.02" width="4.10" height="4.73" rx="0.8" fill="#1c2f27" opacity="0.7"/>
<rect x="307.95" y="271.35" width="4.10" height="4.73" rx="0.8" fill="#1c2f27" opacity="0.7"/>
<rect x="376.45" y="271.35" width="4.10" height="4.73" rx="0.8" fill="#1c2f27" opacity="0.7"/>
<rect x="393.35" y="271.35" width="4.10" height="4.73" rx="0.8" fill="#1c2f27" opacity="0.7"/>
<rect x="289.10" y="282.02" width="3.40" height="4.73" rx="0.8" fill="#1c2f27" opacity="0.7"/>
<rect x="307.95" y="282.02" width="4.10" height="4.73" rx="0.8" fill="#1c2f27" opacity="0.7"/>
<rect x="381.95" y="282.02" width="4.10" height="4.73" rx="0.8" fill="#1c2f27" opacity="0.7"/>
<rect x="387.95" y="282.02" width="4.10" height="4.73" rx="0.8" fill="#1c2f27" opacity="0.7"/>
<rect x="399.20" y="282.02" width="4.10" height="4.73" rx="0.8" fill="#1c2f27" opacity="0.7"/>
<rect x="405.20" y="282.02" width="3.40" height="4.73" rx="0.8" fill="#1c2f27" opacity="0.7"/>
<rect x="412.55" y="282.02" width="4.10" height="4.73" rx="0.8" fill="#1c2f27" opacity="0.7"/>
<rect x="418.20" y="282.02" width="4.10" height="4.73" rx="0.8" fill="#1c2f27" opacity="0.7"/>
<rect x="423.95" y="282.02" width="4.10" height="4.73" rx="0.8" fill="#1c2f27" opacity="0.7"/>
<rect x="433.20" y="282.02" width="4.10" height="4.73" rx="0.8" fill="#1c2f27" opacity="0.7"/>
<rect x="469.45" y="282.02" width="4.10" height="4.73" rx="0.8" fill="#1c2f27" opacity="0.7"/>
<rect x="292.45" y="287.35" width="4.10" height="4.73" rx="0.8" fill="#1c2f27" opacity="0.7"/>
<rect x="311.95" y="287.35" width="4.10" height="4.73" rx="0.8" fill="#1c2f27" opacity="0.7"/>
<rect x="439.25" y="287.35" width="4.10" height="4.73" rx="0.8" fill="#1c2f27" opacity="0.7"/>
<rect x="380.55" y="292.68" width="3.40" height="4.73" rx="0.8" fill="#1c2f27" opacity="0.7"/>
<rect x="475.20" y="292.68" width="4.10" height="4.73" rx="0.8" fill="#1c2f27" opacity="0.7"/>
<rect x="296.45" y="298.02" width="4.10" height="4.73" rx="0.8" fill="#1c2f27" opacity="0.7"/>
<rect x="311.95" y="298.02" width="4.10" height="4.73" rx="0.8" fill="#1c2f27" opacity="0.7"/>
<rect x="445.20" y="303.35" width="3.40" height="4.73" rx="0.8" fill="#1c2f27" opacity="0.7"/>
<rect x="448.55" y="303.35" width="4.10" height="4.73" rx="0.8" fill="#1c2f27" opacity="0.7"/>
<rect x="479.20" y="303.35" width="4.10" height="4.73" rx="0.8" fill="#1c2f27" opacity="0.7"/>
<rect x="300.20" y="308.68" width="4.10" height="4.73" rx="0.8" fill="#1c2f27" opacity="0.7"/>
<rect x="311.95" y="308.68" width="4.10" height="4.73" rx="0.8" fill="#1c2f27" opacity="0.7"/>
<rect x="378.55" y="308.68" width="3.40" height="4.73" rx="0.8" fill="#1c2f27" opacity="0.7"/>
<rect x="456.70" y="308.68" width="3.40" height="4.73" rx="0.8" fill="#1c2f27" opacity="0.7"/>
<rect x="303.55" y="319.35" width="4.10" height="4.73" rx="0.8" fill="#1c2f27" opacity="0.7"/>
<rect x="307.05" y="319.35" width="4.10" height="4.73" rx="0.8" fill="#1c2f27" opacity="0.7"/>
<rect x="332.35" y="319.35" width="4.10" height="4.73" rx="0.8" fill="#1c2f27" opacity="0.7"/>
<rect x="338.20" y="319.35" width="4.10" height="4.73" rx="0.8" fill="#1c2f27" opacity="0.7"/>
<rect x="346.05" y="319.35" width="4.10" height="4.73" rx="0.8" fill="#1c2f27" opacity="0.7"/>
<rect x="353.55" y="319.35" width="4.10" height="4.73" rx="0.8" fill="#1c2f27" opacity="0.7"/>
<rect x="359.20" y="319.35" width="4.10" height="4.73" rx="0.8" fill="#1c2f27" opacity="0.7"/>
<rect x="378.55" y="319.35" width="3.40" height="4.73" rx="0.8" fill="#1c2f27" opacity="0.7"/>
<rect x="479.20" y="319.35" width="4.10" height="4.73" rx="0.8" fill="#1c2f27" opacity="0.7"/>
<rect x="311.70" y="324.68" width="3.10" height="4.73" rx="0.8" fill="#1c2f27" opacity="0.7"/>
<rect x="378.55" y="330.02" width="3.40" height="4.73" rx="0.8" fill="#1c2f27" opacity="0.7"/>
<rect x="459.85" y="330.02" width="4.10" height="4.73" rx="0.8" fill="#1c2f27" opacity="0.7"/>
<rect x="479.20" y="330.02" width="4.10" height="4.73" rx="0.8" fill="#1c2f27" opacity="0.7"/>
<rect x="307.45" y="335.35" width="3.30" height="4.73" rx="0.8" fill="#1c2f27" opacity="0.7"/>
<rect x="311.60" y="335.35" width="3.30" height="4.73" rx="0.8" fill="#1c2f27" opacity="0.7"/>
<rect x="327.25" y="335.35" width="3.50" height="4.73" rx="0.8" fill="#1c2f27" opacity="0.7"/>
<rect x="365.15" y="335.35" width="3.50" height="4.73" rx="0.8" fill="#1c2f27" opacity="0.7"/>
<rect x="334.45" y="346.02" width="4.10" height="4.73" rx="0.8" fill="#1c2f27" opacity="0.7"/>
<rect x="341.70" y="346.02" width="4.10" height="4.73" rx="0.8" fill="#1c2f27" opacity="0.7"/>
<rect x="349.85" y="346.02" width="4.10" height="4.73" rx="0.8" fill="#1c2f27" opacity="0.7"/>
<rect x="357.35" y="346.02" width="4.10" height="4.73" rx="0.8" fill="#1c2f27" opacity="0.7"/>
<rect x="378.55" y="346.02" width="3.40" height="4.73" rx="0.8" fill="#1c2f27" opacity="0.7"/>
<rect x="463.85" y="346.02" width="4.10" height="4.73" rx="0.8" fill="#1c2f27" opacity="0.7"/>
<rect x="479.20" y="346.02" width="4.10" height="4.73" rx="0.8" fill="#1c2f27" opacity="0.7"/>
<rect x="311.95" y="351.35" width="4.10" height="4.73" rx="0.8" fill="#1c2f27" opacity="0.7"/>
<rect x="378.55" y="356.68" width="3.40" height="4.73" rx="0.8" fill="#1c2f27" opacity="0.7"/>
<rect x="467.90" y="356.68" width="3.40" height="4.73" rx="0.8" fill="#1c2f27" opacity="0.7"/>
<rect x="473.70" y="356.68" width="3.40" height="4.73" rx="0.8" fill="#1c2f27" opacity="0.7"/>
<rect x="311.95" y="362.02" width="4.10" height="4.73" rx="0.8" fill="#1c2f27" opacity="0.7"/>
<rect x="479.20" y="367.35" width="4.10" height="4.73" rx="0.8" fill="#1c2f27" opacity="0.7"/>
<rect x="311.95" y="372.68" width="4.10" height="4.73" rx="0.8" fill="#1c2f27" opacity="0.7"/>
<rect x="378.55" y="372.68" width="3.40" height="4.73" rx="0.8" fill="#1c2f27" opacity="0.7"/>
<rect x="475.55" y="372.68" width="3.40" height="4.73" rx="0.8" fill="#1c2f27" opacity="0.7"/>
<rect x="311.95" y="383.35" width="4.10" height="4.73" rx="0.8" fill="#1c2f27" opacity="0.7"/>
<rect x="479.20" y="383.35" width="4.10" height="4.73" rx="0.8" fill="#1c2f27" opacity="0.7"/>
<rect x="378.55" y="394.02" width="3.40" height="4.73" rx="0.8" fill="#1c2f27" opacity="0.7"/>
<rect x="479.20" y="394.02" width="4.10" height="4.73" rx="0.8" fill="#1c2f27" opacity="0.7"/>
<rect x="311.95" y="399.35" width="4.10" height="4.73" rx="0.8" fill="#1c2f27" opacity="0.7"/>
<rect x="378.55" y="410.02" width="3.40" height="4.73" rx="0.8" fill="#1c2f27" opacity="0.7"/>
<rect x="479.20" y="410.02" width="4.10" height="4.73" rx="0.8" fill="#1c2f27" opacity="0.7"/>
<rect x="311.95" y="415.35" width="4.10" height="4.73" rx="0.8" fill="#1c2f27" opacity="0.7"/>
<rect x="378.55" y="420.68" width="3.40" height="4.73" rx="0.8" fill="#1c2f27" opacity="0.7"/>
<rect x="311.95" y="426.02" width="4.10" height="4.73" rx="0.8" fill="#1c2f27" opacity="0.7"/>
<rect x="479.20" y="431.35" width="4.10" height="4.73" rx="0.8" fill="#1c2f27" opacity="0.7"/>
<rect x="311.95" y="436.68" width="4.10" height="4.73" rx="0.8" fill="#1c2f27" opacity="0.7"/>
<rect x="479.20" y="447.35" width="4.10" height="4.73" rx="0.8" fill="#1c2f27" opacity="0.7"/>
<rect x="479.20" y="458.02" width="4.10" height="4.73" rx="0.8" fill="#1c2f27" opacity="0.7"/>
<rect x="475.20" y="474.02" width="4.10" height="4.73" rx="0.8" fill="#1c2f27" opacity="0.7"/>
<rect x="469.45" y="484.68" width="4.10" height="4.73" rx="0.8" fill="#1c2f27" opacity="0.7"/>
<rect x="445.20" y="495.35" width="3.40" height="4.73" rx="0.8" fill="#1c2f27" opacity="0.7"/>
<rect x="459.55" y="495.35" width="4.10" height="4.73" rx="0.8" fill="#1c2f27" opacity="0.7"/>
<rect x="463.85" y="495.35" width="4.10" height="4.73" rx="0.8" fill="#1c2f27" opacity="0.7"/>
<rect x="288.95" y="500.68" width="3.70" height="4.73" rx="0.8" fill="#1c2f27" opacity="0.7"/>
<rect x="292.65" y="500.68" width="3.70" height="4.73" rx="0.8" fill="#1c2f27" opacity="0.7"/>
<rect x="311.65" y="500.68" width="3.70" height="4.73" rx="0.8" fill="#1c2f27" opacity="0.7"/>
<rect x="315.45" y="500.68" width="3.70" height="4.73" rx="0.8" fill="#1c2f27" opacity="0.7"/>
<rect x="319.25" y="500.68" width="3.70" height="4.73" rx="0.8" fill="#1c2f27" opacity="0.7"/>
<rect x="323.06" y="500.68" width="3.70" height="4.73" rx="0.8" fill="#1c2f27" opacity="0.7"/>
<rect x="326.86" y="500.68" width="3.70" height="4.73" rx="0.8" fill="#1c2f27" opacity="0.7"/>
<rect x="330.66" y="500.68" width="3.70" height="4.73" rx="0.8" fill="#1c2f27" opacity="0.7"/>
<rect x="334.46" y="500.68" width="3.70" height="4.73" rx="0.8" fill="#1c2f27" opacity="0.7"/>
<rect x="338.26" y="500.68" width="3.70" height="4.73" rx="0.8" fill="#1c2f27" opacity="0.7"/>
<rect x="342.07" y="500.68" width="3.70" height="4.73" rx="0.8" fill="#1c2f27" opacity="0.7"/>
<rect x="345.87" y="500.68" width="3.70" height="4.73" rx="0.8" fill="#1c2f27" opacity="0.7"/>
<rect x="349.67" y="500.68" width="3.70" height="4.73" rx="0.8" fill="#1c2f27" opacity="0.7"/>
<rect x="353.47" y="500.68" width="3.70" height="4.73" rx="0.8" fill="#1c2f27" opacity="0.7"/>
<rect x="357.27" y="500.68" width="3.70" height="4.73" rx="0.8" fill="#1c2f27" opacity="0.7"/>
<rect x="361.08" y="500.68" width="3.70" height="4.73" rx="0.8" fill="#1c2f27" opacity="0.7"/>
<rect x="364.88" y="500.68" width="3.70" height="4.73" rx="0.8" fill="#1c2f27" opacity="0.7"/>
<rect x="368.68" y="500.68" width="3.70" height="4.73" rx="0.8" fill="#1c2f27" opacity="0.7"/>
<rect x="454.55" y="500.68" width="3.40" height="4.73" rx="0.8" fill="#1c2f27" opacity="0.7"/>
<rect x="439.60" y="506.02" width="3.40" height="4.73" rx="0.8" fill="#1c2f27" opacity="0.7"/>
<rect x="296.25" y="511.35" width="3.70" height="4.73" rx="0.8" fill="#1c2f27" opacity="0.7"/>
<rect x="300.05" y="511.35" width="3.70" height="4.73" rx="0.8" fill="#1c2f27" opacity="0.7"/>
<rect x="303.85" y="511.35" width="3.70" height="4.73" rx="0.8" fill="#1c2f27" opacity="0.7"/>
<rect x="307.66" y="511.35" width="3.70" height="4.73" rx="0.8" fill="#1c2f27" opacity="0.7"/>
<rect x="372.55" y="511.35" width="3.70" height="4.73" rx="0.8" fill="#1c2f27" opacity="0.7"/>
<rect x="376.35" y="511.35" width="3.70" height="4.73" rx="0.8" fill="#1c2f27" opacity="0.7"/>
<rect x="380.15" y="511.35" width="3.70" height="4.73" rx="0.8" fill="#1c2f27" opacity="0.7"/>
<rect x="383.96" y="511.35" width="3.70" height="4.73" rx="0.8" fill="#1c2f27" opacity="0.7"/>
<rect x="387.76" y="511.35" width="3.70" height="4.73" rx="0.8" fill="#1c2f27" opacity="0.7"/>
<rect x="391.56" y="511.35" width="3.70" height="4.73" rx="0.8" fill="#1c2f27" opacity="0.7"/>
<rect x="395.36" y="511.35" width="3.70" height="4.73" rx="0.8" fill="#1c2f27" opacity="0.7"/>
<rect x="399.16" y="511.35" width="3.70" height="4.73" rx="0.8" fill="#1c2f27" opacity="0.7"/>
<rect x="402.97" y="511.35" width="3.70" height="4.73" rx="0.8" fill="#1c2f27" opacity="0.7"/>
<rect x="406.77" y="511.35" width="3.70" height="4.73" rx="0.8" fill="#1c2f27" opacity="0.7"/>
<rect x="410.57" y="511.35" width="3.70" height="4.73" rx="0.8" fill="#1c2f27" opacity="0.7"/>
<rect x="414.37" y="511.35" width="3.70" height="4.73" rx="0.8" fill="#1c2f27" opacity="0.7"/>
<rect x="418.17" y="511.35" width="3.70" height="4.73" rx="0.8" fill="#1c2f27" opacity="0.7"/>
<rect x="421.98" y="511.35" width="3.70" height="4.73" rx="0.8" fill="#1c2f27" opacity="0.7"/>
<rect x="425.78" y="511.35" width="3.70" height="4.73" rx="0.8" fill="#1c2f27" opacity="0.7"/>
<rect x="429.58" y="511.35" width="3.70" height="4.73" rx="0.8" fill="#1c2f27" opacity="0.7"/>
<rect x="433.38" y="511.35" width="3.70" height="4.73" rx="0.8" fill="#1c2f27" opacity="0.7"/>
<rect x="448.75" y="511.35" width="3.70" height="4.73" rx="0.8" fill="#1c2f27" opacity="0.7"/>
<rect x="265.45" y="271.35" width="4.10" height="4.73" rx="0.8" fill="#1c2f27" opacity="0.7"/>
<rect x="271.45" y="271.35" width="4.10" height="4.73" rx="0.8" fill="#1c2f27" opacity="0.7"/>
<rect x="277.55" y="271.35" width="4.10" height="4.73" rx="0.8" fill="#1c2f27" opacity="0.7"/>
<rect x="285.20" y="271.35" width="4.10" height="4.73" rx="0.8" fill="#1c2f27" opacity="0.7"/>
<rect x="262.35" y="276.68" width="4.10" height="4.73" rx="0.8" fill="#1c2f27" opacity="0.7"/>
<rect x="226.35" y="282.02" width="4.10" height="4.73" rx="0.8" fill="#1c2f27" opacity="0.7"/>
<rect x="258.20" y="282.02" width="4.10" height="4.73" rx="0.8" fill="#1c2f27" opacity="0.7"/>
<rect x="204.85" y="287.35" width="4.10" height="4.73" rx="0.8" fill="#1c2f27" opacity="0.7"/>
<rect x="208.95" y="287.35" width="4.10" height="4.73" rx="0.8" fill="#1c2f27" opacity="0.7"/>
<rect x="216.45" y="287.35" width="4.10" height="4.73" rx="0.8" fill="#1c2f27" opacity="0.7"/>
<rect x="222.55" y="287.35" width="4.10" height="4.73" rx="0.8" fill="#1c2f27" opacity="0.7"/>
<rect x="227.95" y="287.35" width="4.10" height="4.73" rx="0.8" fill="#1c2f27" opacity="0.7"/>
<rect x="250.85" y="287.35" width="4.10" height="4.73" rx="0.8" fill="#1c2f27" opacity="0.7"/>
<rect x="254.55" y="287.35" width="4.10" height="4.73" rx="0.8" fill="#1c2f27" opacity="0.7"/>
<rect x="195.45" y="298.02" width="4.10" height="4.73" rx="0.8" fill="#1c2f27" opacity="0.7"/>
<rect x="199.55" y="298.02" width="4.10" height="4.73" rx="0.8" fill="#1c2f27" opacity="0.7"/>
<rect x="202.95" y="298.02" width="4.10" height="4.73" rx="0.8" fill="#1c2f27" opacity="0.7"/>
<rect x="213.30" y="298.02" width="3.40" height="4.73" rx="0.8" fill="#1c2f27" opacity="0.7"/>
<rect x="231.45" y="298.02" width="4.10" height="4.73" rx="0.8" fill="#1c2f27" opacity="0.7"/>
<rect x="235.55" y="298.02" width="4.10" height="4.73" rx="0.8" fill="#1c2f27" opacity="0.7"/>
<rect x="243.35" y="298.02" width="4.10" height="4.73" rx="0.8" fill="#1c2f27" opacity="0.7"/>
<rect x="189.45" y="308.68" width="4.10" height="4.73" rx="0.8" fill="#1c2f27" opacity="0.7"/>
<rect x="193.95" y="308.68" width="4.10" height="4.73" rx="0.8" fill="#1c2f27" opacity="0.7"/>
<rect x="243.35" y="308.68" width="4.10" height="4.73" rx="0.8" fill="#1c2f27" opacity="0.7"/>
<rect x="186.35" y="314.02" width="4.10" height="4.73" rx="0.8" fill="#1c2f27" opacity="0.7"/>
<rect x="184.20" y="324.68" width="4.10" height="4.73" rx="0.8" fill="#1c2f27" opacity="0.7"/>
<rect x="241.35" y="324.68" width="4.10" height="4.73" rx="0.8" fill="#1c2f27" opacity="0.7"/>
<rect x="182.55" y="335.35" width="4.10" height="4.73" rx="0.8" fill="#1c2f27" opacity="0.7"/>
<rect x="241.35" y="340.68" width="4.10" height="4.73" rx="0.8" fill="#1c2f27" opacity="0.7"/>
<rect x="182.55" y="351.35" width="4.10" height="4.73" rx="0.8" fill="#1c2f27" opacity="0.7"/>
<rect x="241.35" y="351.35" width="4.10" height="4.73" rx="0.8" fill="#1c2f27" opacity="0.7"/>
<rect x="180.45" y="362.02" width="4.10" height="4.73" rx="0.8" fill="#1c2f27" opacity="0.7"/>
<rect x="239.35" y="362.02" width="4.10" height="4.73" rx="0.8" fill="#1c2f27" opacity="0.7"/>
<rect x="237.90" y="372.68" width="3.40" height="4.73" rx="0.8" fill="#1c2f27" opacity="0.7"/>
<rect x="178.55" y="378.02" width="4.10" height="4.73" rx="0.8" fill="#1c2f27" opacity="0.7"/>
<rect x="235.90" y="388.68" width="3.40" height="4.73" rx="0.8" fill="#1c2f27" opacity="0.7"/>
<rect x="176.45" y="399.35" width="4.10" height="4.73" rx="0.8" fill="#1c2f27" opacity="0.7"/>
<rect x="235.90" y="404.68" width="3.40" height="4.73" rx="0.8" fill="#1c2f27" opacity="0.7"/>
<rect x="175.20" y="410.02" width="3.40" height="4.73" rx="0.8" fill="#1c2f27" opacity="0.7"/>
<rect x="235.90" y="415.35" width="3.40" height="4.73" rx="0.8" fill="#1c2f27" opacity="0.7"/>
<rect x="178.55" y="426.02" width="4.10" height="4.73" rx="0.8" fill="#1c2f27" opacity="0.7"/>
<rect x="235.90" y="426.02" width="3.40" height="4.73" rx="0.8" fill="#1c2f27" opacity="0.7"/>
<rect x="182.55" y="436.68" width="4.10" height="4.73" rx="0.8" fill="#1c2f27" opacity="0.7"/>
<rect x="186.35" y="442.02" width="4.10" height="4.73" rx="0.8" fill="#1c2f27" opacity="0.7"/>
<rect x="189.65" y="452.68" width="3.70" height="4.73" rx="0.8" fill="#1c2f27" opacity="0.7"/>
<rect x="193.75" y="452.68" width="3.70" height="4.73" rx="0.8" fill="#1c2f27" opacity="0.7"/>
<rect x="197.55" y="463.35" width="3.70" height="4.73" rx="0.8" fill="#1c2f27" opacity="0.7"/>
<rect x="201.25" y="463.35" width="3.70" height="4.73" rx="0.8" fill="#1c2f27" opacity="0.7"/>
<rect x="205.05" y="474.02" width="3.70" height="4.73" rx="0.8" fill="#1c2f27" opacity="0.7"/>
<rect x="209.05" y="474.02" width="3.70" height="4.73" rx="0.8" fill="#1c2f27" opacity="0.7"/>
<rect x="213.15" y="474.02" width="3.70" height="4.73" rx="0.8" fill="#1c2f27" opacity="0.7"/>
<rect x="216.65" y="474.02" width="3.70" height="4.73" rx="0.8" fill="#1c2f27" opacity="0.7"/>
<rect x="220.40" y="479.35" width="3.70" height="4.73" rx="0.8" fill="#1c2f27" opacity="0.7"/>
<rect x="224.15" y="479.35" width="3.70" height="4.73" rx="0.8" fill="#1c2f27" opacity="0.7"/>
<rect x="227.90" y="479.35" width="3.70" height="4.73" rx="0.8" fill="#1c2f27" opacity="0.7"/>
<rect x="231.65" y="479.35" width="3.70" height="4.73" rx="0.8" fill="#1c2f27" opacity="0.7"/>
<rect x="235.75" y="490.02" width="3.70" height="4.73" rx="0.8" fill="#1c2f27" opacity="0.7"/>
<rect x="239.35" y="490.02" width="3.70" height="4.73" rx="0.8" fill="#1c2f27" opacity="0.7"/>
<rect x="243.15" y="490.02" width="3.70" height="4.73" rx="0.8" fill="#1c2f27" opacity="0.7"/>
<rect x="247.15" y="490.02" width="3.70" height="4.73" rx="0.8" fill="#1c2f27" opacity="0.7"/>
<rect x="251.05" y="500.68" width="3.70" height="4.73" rx="0.8" fill="#1c2f27" opacity="0.7"/>
<rect x="254.75" y="500.68" width="3.70" height="4.73" rx="0.8" fill="#1c2f27" opacity="0.7"/>
<rect x="258.55" y="500.68" width="3.70" height="4.73" rx="0.8" fill="#1c2f27" opacity="0.7"/>
<rect x="262.55" y="500.68" width="3.70" height="4.73" rx="0.8" fill="#1c2f27" opacity="0.7"/>
<rect x="281.05" y="500.68" width="3.70" height="4.73" rx="0.8" fill="#1c2f27" opacity="0.7"/>
<rect x="285.05" y="500.68" width="3.70" height="4.73" rx="0.8" fill="#1c2f27" opacity="0.7"/>
<rect x="265.65" y="511.35" width="3.70" height="4.73" rx="0.8" fill="#1c2f27" opacity="0.7"/>
<rect x="269.65" y="511.35" width="3.70" height="4.73" rx="0.8" fill="#1c2f27" opacity="0.7"/>
<rect x="273.75" y="511.35" width="3.70" height="4.73" rx="0.8" fill="#1c2f27" opacity="0.7"/>
<rect x="277.55" y="511.35" width="3.70" height="4.73" rx="0.8" fill="#1c2f27" opacity="0.7"/>
</g><g fill="#d0f0d1" stroke="#a2dba8" stroke-width="0.6">
<rect x="314.20" y="112.05" width="2.80" height="3.33" rx="0.5"/>
<rect x="320.00" y="112.05" width="2.80" height="3.33" rx="0.5"/>
<rect x="325.50" y="112.05" width="2.80" height="3.33" rx="0.5"/>
<rect x="334.90" y="112.05" width="2.80" height="3.33" rx="0.5"/>
<rect x="342.50" y="112.05" width="2.80" height="3.33" rx="0.5"/>
<rect x="348.60" y="112.05" width="2.80" height="3.33" rx="0.5"/>
<rect x="354.10" y="112.05" width="2.80" height="3.33" rx="0.5"/>
<rect x="360.00" y="112.05" width="2.80" height="3.33" rx="0.5"/>
<rect x="329.70" y="112.05" width="2.00" height="3.33" rx="0.5"/>
<rect x="332.00" y="112.05" width="2.00" height="3.33" rx="0.5"/>
<rect x="363.90" y="117.38" width="2.80" height="3.33" rx="0.5"/>
<rect x="368.90" y="117.38" width="2.80" height="3.33" rx="0.5"/>
<rect x="373.20" y="117.38" width="2.80" height="3.33" rx="0.5"/>
<rect x="312.60" y="122.72" width="2.80" height="3.33" rx="0.5"/>
<rect x="312.60" y="128.05" width="2.80" height="3.33" rx="0.5"/>
<rect x="377.10" y="128.05" width="2.80" height="3.33" rx="0.5"/>
<rect x="377.10" y="138.72" width="2.80" height="3.33" rx="0.5"/>
<rect x="312.60" y="144.05" width="2.80" height="3.33" rx="0.5"/>
<rect x="337.20" y="144.05" width="2.80" height="3.33" rx="0.5"/>
<rect x="346.70" y="144.05" width="2.80" height="3.33" rx="0.5"/>
<rect x="354.10" y="144.05" width="2.80" height="3.33" rx="0.5"/>
<rect x="358.00" y="144.05" width="2.80" height="3.33" rx="0.5"/>
<rect x="327.80" y="144.05" width="2.20" height="3.33" rx="0.5"/>
<rect x="330.30" y="144.05" width="2.20" height="3.33" rx="0.5"/>
<rect x="363.85" y="154.72" width="2.80" height="3.33" rx="0.5"/>
<rect x="377.10" y="154.72" width="2.80" height="3.33" rx="0.5"/>
<rect x="312.60" y="160.05" width="2.80" height="3.33" rx="0.5"/>
<rect x="327.95" y="160.05" width="2.10" height="3.33" rx="0.5"/>
<rect x="312.60" y="170.72" width="2.80" height="3.33" rx="0.5"/>
<rect x="327.95" y="170.72" width="2.10" height="3.33" rx="0.5"/>
<rect x="377.10" y="170.72" width="2.80" height="3.33" rx="0.5"/>
<rect x="312.60" y="181.38" width="2.80" height="3.33" rx="0.5"/>
<rect x="329.95" y="181.38" width="2.10" height="3.33" rx="0.5"/>
<rect x="363.85" y="181.38" width="2.80" height="3.33" rx="0.5"/>
<rect x="377.10" y="181.38" width="2.80" height="3.33" rx="0.5"/>
<rect x="308.60" y="192.05" width="2.80" height="3.33" rx="0.5"/>
<rect x="335.10" y="192.05" width="2.80" height="3.33" rx="0.5"/>
<rect x="340.85" y="192.05" width="2.80" height="3.33" rx="0.5"/>
<rect x="346.50" y="192.05" width="2.80" height="3.33" rx="0.5"/>
<rect x="352.10" y="192.05" width="2.80" height="3.33" rx="0.5"/>
<rect x="358.00" y="192.05" width="2.80" height="3.33" rx="0.5"/>
<rect x="377.10" y="192.05" width="2.80" height="3.33" rx="0.5"/>
<rect x="377.10" y="202.72" width="2.80" height="3.33" rx="0.5"/>
<rect x="308.60" y="208.05" width="2.80" height="3.33" rx="0.5"/>
<rect x="308.60" y="218.72" width="2.80" height="3.33" rx="0.5"/>
<rect x="377.10" y="218.72" width="2.80" height="3.33" rx="0.5"/>
<rect x="308.60" y="234.72" width="2.80" height="3.33" rx="0.5"/>
<rect x="377.10" y="234.72" width="2.80" height="3.33" rx="0.5"/>
<rect x="433.85" y="240.05" width="2.80" height="3.33" rx="0.5"/>
<rect x="308.60" y="245.38" width="2.80" height="3.33" rx="0.5"/>
<rect x="401.80" y="245.38" width="2.80" height="3.33" rx="0.5"/>
<rect x="409.00" y="245.38" width="2.80" height="3.33" rx="0.5"/>
<rect x="415.10" y="245.38" width="2.80" height="3.33" rx="0.5"/>
<rect x="420.70" y="245.38" width="2.80" height="3.33" rx="0.5"/>
<rect x="426.50" y="245.38" width="2.80" height="3.33" rx="0.5"/>
<rect x="439.90" y="245.38" width="2.80" height="3.33" rx="0.5"/>
<rect x="308.60" y="256.05" width="2.80" height="3.33" rx="0.5"/>
<rect x="377.10" y="256.05" width="2.80" height="3.33" rx="0.5"/>
<rect x="397.80" y="256.05" width="2.80" height="3.33" rx="0.5"/>
<rect x="445.85" y="256.05" width="2.10" height="3.33" rx="0.5"/>
<rect x="453.20" y="256.05" width="2.80" height="3.33" rx="0.5"/>
<rect x="395.85" y="266.72" width="2.80" height="3.33" rx="0.5"/>
<rect x="457.35" y="266.72" width="2.10" height="3.33" rx="0.5"/>
<rect x="464.50" y="266.72" width="2.80" height="3.33" rx="0.5"/>
<rect x="308.60" y="272.05" width="2.80" height="3.33" rx="0.5"/>
<rect x="377.10" y="272.05" width="2.80" height="3.33" rx="0.5"/>
<rect x="394.00" y="272.05" width="2.80" height="3.33" rx="0.5"/>
<rect x="289.75" y="282.72" width="2.10" height="3.33" rx="0.5"/>
<rect x="308.60" y="282.72" width="2.80" height="3.33" rx="0.5"/>
<rect x="382.60" y="282.72" width="2.80" height="3.33" rx="0.5"/>
<rect x="388.60" y="282.72" width="2.80" height="3.33" rx="0.5"/>
<rect x="399.85" y="282.72" width="2.80" height="3.33" rx="0.5"/>
<rect x="405.85" y="282.72" width="2.10" height="3.33" rx="0.5"/>
<rect x="413.20" y="282.72" width="2.80" height="3.33" rx="0.5"/>
<rect x="418.85" y="282.72" width="2.80" height="3.33" rx="0.5"/>
<rect x="424.60" y="282.72" width="2.80" height="3.33" rx="0.5"/>
<rect x="433.85" y="282.72" width="2.80" height="3.33" rx="0.5"/>
<rect x="470.10" y="282.72" width="2.80" height="3.33" rx="0.5"/>
<rect x="293.10" y="288.05" width="2.80" height="3.33" rx="0.5"/>
<rect x="312.60" y="288.05" width="2.80" height="3.33" rx="0.5"/>
<rect x="439.90" y="288.05" width="2.80" height="3.33" rx="0.5"/>
<rect x="381.20" y="293.38" width="2.10" height="3.33" rx="0.5"/>
<rect x="475.85" y="293.38" width="2.80" height="3.33" rx="0.5"/>
<rect x="297.10" y="298.72" width="2.80" height="3.33" rx="0.5"/>
<rect x="312.60" y="298.72" width="2.80" height="3.33" rx="0.5"/>
<rect x="445.85" y="304.05" width="2.10" height="3.33" rx="0.5"/>
<rect x="449.20" y="304.05" width="2.80" height="3.33" rx="0.5"/>
<rect x="479.85" y="304.05" width="2.80" height="3.33" rx="0.5"/>
<rect x="300.85" y="309.38" width="2.80" height="3.33" rx="0.5"/>
<rect x="312.60" y="309.38" width="2.80" height="3.33" rx="0.5"/>
<rect x="379.20" y="309.38" width="2.10" height="3.33" rx="0.5"/>
<rect x="457.35" y="309.38" width="2.10" height="3.33" rx="0.5"/>
<rect x="304.20" y="320.05" width="2.80" height="3.33" rx="0.5"/>
<rect x="307.70" y="320.05" width="2.80" height="3.33" rx="0.5"/>
<rect x="333.00" y="320.05" width="2.80" height="3.33" rx="0.5"/>
<rect x="338.85" y="320.05" width="2.80" height="3.33" rx="0.5"/>
<rect x="346.70" y="320.05" width="2.80" height="3.33" rx="0.5"/>
<rect x="354.20" y="320.05" width="2.80" height="3.33" rx="0.5"/>
<rect x="359.85" y="320.05" width="2.80" height="3.33" rx="0.5"/>
<rect x="379.20" y="320.05" width="2.10" height="3.33" rx="0.5"/>
<rect x="479.85" y="320.05" width="2.80" height="3.33" rx="0.5"/>
<rect x="312.35" y="325.38" width="1.80" height="3.33" rx="0.5"/>
<rect x="379.20" y="330.72" width="2.10" height="3.33" rx="0.5"/>
<rect x="460.50" y="330.72" width="2.80" height="3.33" rx="0.5"/>
<rect x="479.85" y="330.72" width="2.80" height="3.33" rx="0.5"/>
<rect x="308.10" y="336.05" width="2.00" height="3.33" rx="0.5"/>
<rect x="312.25" y="336.05" width="2.00" height="3.33" rx="0.5"/>
<rect x="327.90" y="336.05" width="2.20" height="3.33" rx="0.5"/>
<rect x="365.80" y="336.05" width="2.20" height="3.33" rx="0.5"/>
<rect x="335.10" y="346.72" width="2.80" height="3.33" rx="0.5"/>
<rect x="342.35" y="346.72" width="2.80" height="3.33" rx="0.5"/>
<rect x="350.50" y="346.72" width="2.80" height="3.33" rx="0.5"/>
<rect x="358.00" y="346.72" width="2.80" height="3.33" rx="0.5"/>
<rect x="379.20" y="346.72" width="2.10" height="3.33" rx="0.5"/>
<rect x="464.50" y="346.72" width="2.80" height="3.33" rx="0.5"/>
<rect x="479.85" y="346.72" width="2.80" height="3.33" rx="0.5"/>
<rect x="312.60" y="352.05" width="2.80" height="3.33" rx="0.5"/>
<rect x="379.20" y="357.38" width="2.10" height="3.33" rx="0.5"/>
<rect x="468.55" y="357.38" width="2.10" height="3.33" rx="0.5"/>
<rect x="474.35" y="357.38" width="2.10" height="3.33" rx="0.5"/>
<rect x="312.60" y="362.72" width="2.80" height="3.33" rx="0.5"/>
<rect x="479.85" y="368.05" width="2.80" height="3.33" rx="0.5"/>
<rect x="312.60" y="373.38" width="2.80" height="3.33" rx="0.5"/>
<rect x="379.20" y="373.38" width="2.10" height="3.33" rx="0.5"/>
<rect x="476.20" y="373.38" width="2.10" height="3.33" rx="0.5"/>
<rect x="312.60" y="384.05" width="2.80" height="3.33" rx="0.5"/>
<rect x="479.85" y="384.05" width="2.80" height="3.33" rx="0.5"/>
<rect x="379.20" y="394.72" width="2.10" height="3.33" rx="0.5"/>
<rect x="479.85" y="394.72" width="2.80" height="3.33" rx="0.5"/>
<rect x="312.60" y="400.05" width="2.80" height="3.33" rx="0.5"/>
<rect x="379.20" y="410.72" width="2.10" height="3.33" rx="0.5"/>
<rect x="479.85" y="410.72" width="2.80" height="3.33" rx="0.5"/>
<rect x="312.60" y="416.05" width="2.80" height="3.33" rx="0.5"/>
<rect x="379.20" y="421.38" width="2.10" height="3.33" rx="0.5"/>
<rect x="312.60" y="426.72" width="2.80" height="3.33" rx="0.5"/>
<rect x="479.85" y="432.05" width="2.80" height="3.33" rx="0.5"/>
<rect x="312.60" y="437.38" width="2.80" height="3.33" rx="0.5"/>
<rect x="479.85" y="448.05" width="2.80" height="3.33" rx="0.5"/>
<rect x="479.85" y="458.72" width="2.80" height="3.33" rx="0.5"/>
<rect x="475.85" y="474.72" width="2.80" height="3.33" rx="0.5"/>
<rect x="470.10" y="485.38" width="2.80" height="3.33" rx="0.5"/>
<rect x="445.85" y="496.05" width="2.10" height="3.33" rx="0.5"/>
<rect x="460.20" y="496.05" width="2.80" height="3.33" rx="0.5"/>
<rect x="464.50" y="496.05" width="2.80" height="3.33" rx="0.5"/>
<rect x="289.60" y="501.38" width="2.40" height="3.33" rx="0.5"/>
<rect x="293.30" y="501.38" width="2.40" height="3.33" rx="0.5"/>
<rect x="312.30" y="501.38" width="2.40" height="3.33" rx="0.5"/>
<rect x="316.10" y="501.38" width="2.40" height="3.33" rx="0.5"/>
<rect x="319.90" y="501.38" width="2.40" height="3.33" rx="0.5"/>
<rect x="323.71" y="501.38" width="2.40" height="3.33" rx="0.5"/>
<rect x="327.51" y="501.38" width="2.40" height="3.33" rx="0.5"/>
<rect x="331.31" y="501.38" width="2.40" height="3.33" rx="0.5"/>
<rect x="335.11" y="501.38" width="2.40" height="3.33" rx="0.5"/>
<rect x="338.91" y="501.38" width="2.40" height="3.33" rx="0.5"/>
<rect x="342.72" y="501.38" width="2.40" height="3.33" rx="0.5"/>
<rect x="346.52" y="501.38" width="2.40" height="3.33" rx="0.5"/>
<rect x="350.32" y="501.38" width="2.40" height="3.33" rx="0.5"/>
<rect x="354.12" y="501.38" width="2.40" height="3.33" rx="0.5"/>
<rect x="357.92" y="501.38" width="2.40" height="3.33" rx="0.5"/>
<rect x="361.73" y="501.38" width="2.40" height="3.33" rx="0.5"/>
<rect x="365.53" y="501.38" width="2.40" height="3.33" rx="0.5"/>
<rect x="369.33" y="501.38" width="2.40" height="3.33" rx="0.5"/>
<rect x="455.20" y="501.38" width="2.10" height="3.33" rx="0.5"/>
<rect x="440.25" y="506.72" width="2.10" height="3.33" rx="0.5"/>
<rect x="296.90" y="512.05" width="2.40" height="3.33" rx="0.5"/>
<rect x="300.70" y="512.05" width="2.40" height="3.33" rx="0.5"/>
<rect x="304.50" y="512.05" width="2.40" height="3.33" rx="0.5"/>
<rect x="308.31" y="512.05" width="2.40" height="3.33" rx="0.5"/>
<rect x="373.20" y="512.05" width="2.40" height="3.33" rx="0.5"/>
<rect x="377.00" y="512.05" width="2.40" height="3.33" rx="0.5"/>
<rect x="380.80" y="512.05" width="2.40" height="3.33" rx="0.5"/>
<rect x="384.61" y="512.05" width="2.40" height="3.33" rx="0.5"/>
<rect x="388.41" y="512.05" width="2.40" height="3.33" rx="0.5"/>
<rect x="392.21" y="512.05" width="2.40" height="3.33" rx="0.5"/>
<rect x="396.01" y="512.05" width="2.40" height="3.33" rx="0.5"/>
<rect x="399.81" y="512.05" width="2.40" height="3.33" rx="0.5"/>
<rect x="403.62" y="512.05" width="2.40" height="3.33" rx="0.5"/>
<rect x="407.42" y="512.05" width="2.40" height="3.33" rx="0.5"/>
<rect x="411.22" y="512.05" width="2.40" height="3.33" rx="0.5"/>
<rect x="415.02" y="512.05" width="2.40" height="3.33" rx="0.5"/>
<rect x="418.82" y="512.05" width="2.40" height="3.33" rx="0.5"/>
<rect x="422.63" y="512.05" width="2.40" height="3.33" rx="0.5"/>
<rect x="426.43" y="512.05" width="2.40" height="3.33" rx="0.5"/>
<rect x="430.23" y="512.05" width="2.40" height="3.33" rx="0.5"/>
<rect x="434.03" y="512.05" width="2.40" height="3.33" rx="0.5"/>
<rect x="449.40" y="512.05" width="2.40" height="3.33" rx="0.5"/>
<rect x="266.10" y="272.05" width="2.80" height="3.33" rx="0.5"/>
<rect x="272.10" y="272.05" width="2.80" height="3.33" rx="0.5"/>
<rect x="278.20" y="272.05" width="2.80" height="3.33" rx="0.5"/>
<rect x="285.85" y="272.05" width="2.80" height="3.33" rx="0.5"/>
<rect x="263.00" y="277.38" width="2.80" height="3.33" rx="0.5"/>
<rect x="227.00" y="282.72" width="2.80" height="3.33" rx="0.5"/>
<rect x="258.85" y="282.72" width="2.80" height="3.33" rx="0.5"/>
<rect x="205.50" y="288.05" width="2.80" height="3.33" rx="0.5"/>
<rect x="209.60" y="288.05" width="2.80" height="3.33" rx="0.5"/>
<rect x="217.10" y="288.05" width="2.80" height="3.33" rx="0.5"/>
<rect x="223.20" y="288.05" width="2.80" height="3.33" rx="0.5"/>
<rect x="228.60" y="288.05" width="2.80" height="3.33" rx="0.5"/>
<rect x="251.50" y="288.05" width="2.80" height="3.33" rx="0.5"/>
<rect x="255.20" y="288.05" width="2.80" height="3.33" rx="0.5"/>
<rect x="196.10" y="298.72" width="2.80" height="3.33" rx="0.5"/>
<rect x="200.20" y="298.72" width="2.80" height="3.33" rx="0.5"/>
<rect x="203.60" y="298.72" width="2.80" height="3.33" rx="0.5"/>
<rect x="213.95" y="298.72" width="2.10" height="3.33" rx="0.5"/>
<rect x="232.10" y="298.72" width="2.80" height="3.33" rx="0.5"/>
<rect x="236.20" y="298.72" width="2.80" height="3.33" rx="0.5"/>
<rect x="244.00" y="298.72" width="2.80" height="3.33" rx="0.5"/>
<rect x="190.10" y="309.38" width="2.80" height="3.33" rx="0.5"/>
<rect x="194.60" y="309.38" width="2.80" height="3.33" rx="0.5"/>
<rect x="244.00" y="309.38" width="2.80" height="3.33" rx="0.5"/>
<rect x="187.00" y="314.72" width="2.80" height="3.33" rx="0.5"/>
<rect x="184.85" y="325.38" width="2.80" height="3.33" rx="0.5"/>
<rect x="242.00" y="325.38" width="2.80" height="3.33" rx="0.5"/>
<rect x="183.20" y="336.05" width="2.80" height="3.33" rx="0.5"/>
<rect x="242.00" y="341.38" width="2.80" height="3.33" rx="0.5"/>
<rect x="183.20" y="352.05" width="2.80" height="3.33" rx="0.5"/>
<rect x="242.00" y="352.05" width="2.80" height="3.33" rx="0.5"/>
<rect x="181.10" y="362.72" width="2.80" height="3.33" rx="0.5"/>
<rect x="240.00" y="362.72" width="2.80" height="3.33" rx="0.5"/>
<rect x="238.55" y="373.38" width="2.10" height="3.33" rx="0.5"/>
<rect x="179.20" y="378.72" width="2.80" height="3.33" rx="0.5"/>
<rect x="236.55" y="389.38" width="2.10" height="3.33" rx="0.5"/>
<rect x="177.10" y="400.05" width="2.80" height="3.33" rx="0.5"/>
<rect x="236.55" y="405.38" width="2.10" height="3.33" rx="0.5"/>
<rect x="175.85" y="410.72" width="2.10" height="3.33" rx="0.5"/>
<rect x="236.55" y="416.05" width="2.10" height="3.33" rx="0.5"/>
<rect x="179.20" y="426.72" width="2.80" height="3.33" rx="0.5"/>
<rect x="236.55" y="426.72" width="2.10" height="3.33" rx="0.5"/>
<rect x="183.20" y="437.38" width="2.80" height="3.33" rx="0.5"/>
<rect x="187.00" y="442.72" width="2.80" height="3.33" rx="0.5"/>
<rect x="190.30" y="453.38" width="2.40" height="3.33" rx="0.5"/>
<rect x="194.40" y="453.38" width="2.40" height="3.33" rx="0.5"/>
<rect x="198.20" y="464.05" width="2.40" height="3.33" rx="0.5"/>
<rect x="201.90" y="464.05" width="2.40" height="3.33" rx="0.5"/>
<rect x="205.70" y="474.72" width="2.40" height="3.33" rx="0.5"/>
<rect x="209.70" y="474.72" width="2.40" height="3.33" rx="0.5"/>
<rect x="213.80" y="474.72" width="2.40" height="3.33" rx="0.5"/>
<rect x="217.30" y="474.72" width="2.40" height="3.33" rx="0.5"/>
<rect x="221.05" y="480.05" width="2.40" height="3.33" rx="0.5"/>
<rect x="224.80" y="480.05" width="2.40" height="3.33" rx="0.5"/>
<rect x="228.55" y="480.05" width="2.40" height="3.33" rx="0.5"/>
<rect x="232.30" y="480.05" width="2.40" height="3.33" rx="0.5"/>
<rect x="236.40" y="490.72" width="2.40" height="3.33" rx="0.5"/>
<rect x="240.00" y="490.72" width="2.40" height="3.33" rx="0.5"/>
<rect x="243.80" y="490.72" width="2.40" height="3.33" rx="0.5"/>
<rect x="247.80" y="490.72" width="2.40" height="3.33" rx="0.5"/>
<rect x="251.70" y="501.38" width="2.40" height="3.33" rx="0.5"/>
<rect x="255.40" y="501.38" width="2.40" height="3.33" rx="0.5"/>
<rect x="259.20" y="501.38" width="2.40" height="3.33" rx="0.5"/>
<rect x="263.20" y="501.38" width="2.40" height="3.33" rx="0.5"/>
<rect x="281.70" y="501.38" width="2.40" height="3.33" rx="0.5"/>
<rect x="285.70" y="501.38" width="2.40" height="3.33" rx="0.5"/>
<rect x="266.30" y="512.05" width="2.40" height="3.33" rx="0.5"/>
<rect x="270.30" y="512.05" width="2.40" height="3.33" rx="0.5"/>
<rect x="274.40" y="512.05" width="2.40" height="3.33" rx="0.5"/>
<rect x="278.20" y="512.05" width="2.40" height="3.33" rx="0.5"/>
</g>
<rect x="173.6" y="596.6" width="308.29999999999995" height="83.39999999999998" fill="#b0e8b4"/>
<rect x="192.15" y="600.1" width="0.7" height="79.89999999999998" fill="#5d9465"/>
<rect x="207.15" y="600.1" width="0.7" height="79.89999999999998" fill="#5d9465"/>
<rect x="210.95" y="600.1" width="0.7" height="79.89999999999998" fill="#5d9465"/>
<rect x="218.35" y="600.1" width="0.9" height="79.89999999999998" fill="#8fbf95"/>
<rect x="230.05" y="600.1" width="0.7" height="79.89999999999998" fill="#5d9465"/>
<rect x="234.15" y="600.1" width="0.7" height="79.89999999999998" fill="#5d9465"/>
<rect x="245.15" y="600.1" width="0.7" height="79.89999999999998" fill="#5d9465"/>
<rect x="249.15" y="600.1" width="0.7" height="79.89999999999998" fill="#5d9465"/>
<rect x="256.55" y="600.1" width="0.9" height="79.89999999999998" fill="#8fbf95"/>
<rect x="260.65" y="600.1" width="0.7" height="79.89999999999998" fill="#5d9465"/>
<rect x="268.25" y="600.1" width="0.7" height="79.89999999999998" fill="#5d9465"/>
<rect x="276.15" y="600.1" width="0.7" height="79.89999999999998" fill="#5d9465"/>
<rect x="283.15" y="600.1" width="0.7" height="79.89999999999998" fill="#5d9465"/>
<rect x="286.85" y="600.1" width="0.7" height="79.89999999999998" fill="#5d9465"/>
<rect x="294.35" y="600.1" width="0.9" height="79.89999999999998" fill="#8fbf95"/>
<rect x="298.65" y="600.1" width="0.7" height="79.89999999999998" fill="#5d9465"/>
<rect x="306.05" y="600.1" width="0.7" height="79.89999999999998" fill="#5d9465"/>
<rect x="310.05" y="600.1" width="0.7" height="79.89999999999998" fill="#5d9465"/>
<rect x="321.25" y="600.1" width="0.7" height="79.89999999999998" fill="#5d9465"/>
<rect x="370.35" y="600.1" width="0.9" height="79.89999999999998" fill="#8fbf95"/>
<rect x="374.55" y="600.1" width="0.9" height="79.89999999999998" fill="#8fbf95"/>
<rect x="386.15" y="600.1" width="0.7" height="79.89999999999998" fill="#5d9465"/>
<rect x="390.05" y="600.1" width="0.7" height="79.89999999999998" fill="#5d9465"/>
<rect x="416.55" y="600.1" width="0.9" height="79.89999999999998" fill="#8fbf95"/>
<rect x="428.15" y="600.1" width="0.7" height="79.89999999999998" fill="#5d9465"/>
<rect x="450.55" y="600.1" width="0.9" height="79.89999999999998" fill="#8fbf95"/>
<rect x="462.15" y="600.1" width="0.7" height="79.89999999999998" fill="#5d9465"/>
<rect x="466.05" y="600.1" width="0.7" height="79.89999999999998" fill="#5d9465"/>
<rect x="477.35" y="600.1" width="0.7" height="79.89999999999998" fill="#5d9465"/>
<rect x="344.2" y="600.1" width="0.7" height="79.89999999999998" fill="#8c8f58"/>
<rect x="435.40" y="600.1" width="2.2" height="79.89999999999998" fill="#2c3e42"/>
<rect x="441.50" y="600.1" width="2.2" height="79.89999999999998" fill="#2c3e42"/>
<rect x="172.0" y="593.0" width="311.69999999999993" height="7.2" rx="3.6" fill="#bdeec1"/>
<rect x="172.6" y="593.8000000000001" width="310.49999999999994" height="5.6" rx="2.8" fill="#b2e6b6"/>
<path d="M189.25 593.47 A3.3 3.3 0 1 0 189.25 599.73 A3.3 3.3 0 0 1 189.25 593.47 Z" fill="#4c9556"/>
<path d="M192.25 593.47 A3.3 3.3 0 1 0 192.25 599.73 A3.3 3.3 0 0 1 192.25 593.47 Z" fill="#4c9556"/>
<path d="M207.85 593.47 A3.3 3.3 0 1 0 207.85 599.73 A3.3 3.3 0 0 1 207.85 593.47 Z" fill="#4c9556"/>
<path d="M211.35 593.47 A3.3 3.3 0 1 0 211.35 599.73 A3.3 3.3 0 0 1 211.35 593.47 Z" fill="#4c9556"/>
<path d="M215.15 593.47 A3.3 3.3 0 1 0 215.15 599.73 A3.3 3.3 0 0 1 215.15 593.47 Z" fill="#4c9556"/>
<path d="M219.05 593.47 A3.3 3.3 0 1 0 219.05 599.73 A3.3 3.3 0 0 1 219.05 593.47 Z" fill="#4c9556"/>
<path d="M229.75 593.47 A3.3 3.3 0 1 0 229.75 599.73 A3.3 3.3 0 0 1 229.75 593.47 Z" fill="#4c9556"/>
<path d="M233.85 593.47 A3.3 3.3 0 1 0 233.85 599.73 A3.3 3.3 0 0 1 233.85 593.47 Z" fill="#4c9556"/>
<path d="M245.75 593.47 A3.3 3.3 0 1 0 245.75 599.73 A3.3 3.3 0 0 1 245.75 593.47 Z" fill="#4c9556"/>
<path d="M249.55 593.47 A3.3 3.3 0 1 0 249.55 599.73 A3.3 3.3 0 0 1 249.55 593.47 Z" fill="#4c9556"/>
<path d="M253.35 593.47 A3.3 3.3 0 1 0 253.35 599.73 A3.3 3.3 0 0 1 253.35 593.47 Z" fill="#4c9556"/>
<path d="M257.25 593.47 A3.3 3.3 0 1 0 257.25 599.73 A3.3 3.3 0 0 1 257.25 593.47 Z" fill="#4c9556"/>
<path d="M261.05 593.47 A3.3 3.3 0 1 0 261.05 599.73 A3.3 3.3 0 0 1 261.05 593.47 Z" fill="#4c9556"/>
<path d="M264.85 593.47 A3.3 3.3 0 1 0 264.85 599.73 A3.3 3.3 0 0 1 264.85 593.47 Z" fill="#4c9556"/>
<path d="M268.65 593.47 A3.3 3.3 0 1 0 268.65 599.73 A3.3 3.3 0 0 1 268.65 593.47 Z" fill="#4c9556"/>
<path d="M276.25 593.47 A3.3 3.3 0 1 0 276.25 599.73 A3.3 3.3 0 0 1 276.25 593.47 Z" fill="#4c9556"/>
<path d="M280.15 593.47 A3.3 3.3 0 1 0 280.15 599.73 A3.3 3.3 0 0 1 280.15 593.47 Z" fill="#4c9556"/>
<path d="M283.95 593.47 A3.3 3.3 0 1 0 283.95 599.73 A3.3 3.3 0 0 1 283.95 593.47 Z" fill="#4c9556"/>
<path d="M287.75 593.47 A3.3 3.3 0 1 0 287.75 599.73 A3.3 3.3 0 0 1 287.75 593.47 Z" fill="#4c9556"/>
<path d="M291.55 593.47 A3.3 3.3 0 1 0 291.55 599.73 A3.3 3.3 0 0 1 291.55 593.47 Z" fill="#4c9556"/>
<path d="M295.35 593.47 A3.3 3.3 0 1 0 295.35 599.73 A3.3 3.3 0 0 1 295.35 593.47 Z" fill="#4c9556"/>
<path d="M299.25 593.47 A3.3 3.3 0 1 0 299.25 599.73 A3.3 3.3 0 0 1 299.25 593.47 Z" fill="#4c9556"/>
<path d="M303.05 593.47 A3.3 3.3 0 1 0 303.05 599.73 A3.3 3.3 0 0 1 303.05 593.47 Z" fill="#4c9556"/>
<path d="M306.85 593.47 A3.3 3.3 0 1 0 306.85 599.73 A3.3 3.3 0 0 1 306.85 593.47 Z" fill="#4c9556"/>
<path d="M310.65 593.47 A3.3 3.3 0 1 0 310.65 599.73 A3.3 3.3 0 0 1 310.65 593.47 Z" fill="#4c9556"/>
<path d="M318.25 593.47 A3.3 3.3 0 1 0 318.25 599.73 A3.3 3.3 0 0 1 318.25 593.47 Z" fill="#4c9556"/>
<path d="M322.15 593.47 A3.3 3.3 0 1 0 322.15 599.73 A3.3 3.3 0 0 1 322.15 593.47 Z" fill="#4c9556"/>
<path d="M333.05 593.47 A3.3 3.3 0 1 0 333.05 599.73 A3.3 3.3 0 0 1 333.05 593.47 Z" fill="#4c9556"/>
<path d="M343.85 593.47 A3.3 3.3 0 1 0 343.85 599.73 A3.3 3.3 0 0 1 343.85 593.47 Z" fill="#4c9556"/>
<path d="M356.15 593.47 A3.3 3.3 0 1 0 356.15 599.73 A3.3 3.3 0 0 1 356.15 593.47 Z" fill="#4c9556"/>
<path d="M367.85 593.47 A3.3 3.3 0 1 0 367.85 599.73 A3.3 3.3 0 0 1 367.85 593.47 Z" fill="#4c9556"/>
<path d="M371.35 593.47 A3.3 3.3 0 1 0 371.35 599.73 A3.3 3.3 0 0 1 371.35 593.47 Z" fill="#4c9556"/>
<path d="M375.15 593.47 A3.3 3.3 0 1 0 375.15 599.73 A3.3 3.3 0 0 1 375.15 593.47 Z" fill="#4c9556"/>
<path d="M385.85 593.47 A3.3 3.3 0 1 0 385.85 599.73 A3.3 3.3 0 0 1 385.85 593.47 Z" fill="#4c9556"/>
<path d="M389.75 593.47 A3.3 3.3 0 1 0 389.75 599.73 A3.3 3.3 0 0 1 389.75 593.47 Z" fill="#4c9556"/>
<path d="M417.25 593.47 A3.3 3.3 0 1 0 417.25 599.73 A3.3 3.3 0 0 1 417.25 593.47 Z" fill="#4c9556"/>
<path d="M427.85 593.47 A3.3 3.3 0 1 0 427.85 599.73 A3.3 3.3 0 0 1 427.85 593.47 Z" fill="#4c9556"/>
<path d="M431.75 593.47 A3.3 3.3 0 1 0 431.75 599.73 A3.3 3.3 0 0 1 431.75 593.47 Z" fill="#4c9556"/>
<path d="M447.75 593.47 A3.3 3.3 0 1 0 447.75 599.73 A3.3 3.3 0 0 1 447.75 593.47 Z" fill="#4c9556"/>
<path d="M451.55 593.47 A3.3 3.3 0 1 0 451.55 599.73 A3.3 3.3 0 0 1 451.55 593.47 Z" fill="#4c9556"/>
<path d="M459.15 593.47 A3.3 3.3 0 1 0 459.15 599.73 A3.3 3.3 0 0 1 459.15 593.47 Z" fill="#4c9556"/>
<path d="M462.75 593.47 A3.3 3.3 0 1 0 462.75 599.73 A3.3 3.3 0 0 1 462.75 593.47 Z" fill="#4c9556"/>
<path d="M466.55 593.47 A3.3 3.3 0 1 0 466.55 599.73 A3.3 3.3 0 0 1 466.55 593.47 Z" fill="#4c9556"/>
<path d="M472.25 593.47 A3.3 3.3 0 1 0 472.25 599.73 A3.3 3.3 0 0 1 472.25 593.47 Z" fill="#4c9556"/>
<path d="M477.45 593.47 A3.3 3.3 0 1 0 477.45 599.73 A3.3 3.3 0 0 1 477.45 593.47 Z" fill="#4c9556"/>
<circle cx="433.6" cy="596.6" r="2.9" fill="#4c9556"/>
<circle cx="439.7" cy="596.6" r="2.9" fill="#4c9556"/>
<circle cx="479.8" cy="596.6" r="2.9" fill="#4c9556"/>
<ellipse cx="177" cy="596.6" rx="0.9" ry="2.2" fill="none" stroke="#86c78d" stroke-width="0.5"/>
<ellipse cx="179" cy="596.6" rx="0.9" ry="2.2" fill="none" stroke="#86c78d" stroke-width="0.5"/>
<ellipse cx="181" cy="596.6" rx="0.9" ry="2.2" fill="none" stroke="#86c78d" stroke-width="0.5"/>
<ellipse cx="183" cy="596.6" rx="0.9" ry="2.2" fill="none" stroke="#86c78d" stroke-width="0.5"/>
<ellipse cx="194" cy="596.6" rx="0.9" ry="2.2" fill="none" stroke="#86c78d" stroke-width="0.5"/>
<ellipse cx="196" cy="596.6" rx="0.9" ry="2.2" fill="none" stroke="#86c78d" stroke-width="0.5"/>
<ellipse cx="198" cy="596.6" rx="0.9" ry="2.2" fill="none" stroke="#86c78d" stroke-width="0.5"/>
<ellipse cx="200" cy="596.6" rx="0.9" ry="2.2" fill="none" stroke="#86c78d" stroke-width="0.5"/>
<ellipse cx="221" cy="596.6" rx="0.9" ry="2.2" fill="none" stroke="#86c78d" stroke-width="0.5"/>
<ellipse cx="223" cy="596.6" rx="0.9" ry="2.2" fill="none" stroke="#86c78d" stroke-width="0.5"/>
<ellipse cx="236" cy="596.6" rx="0.9" ry="2.2" fill="none" stroke="#86c78d" stroke-width="0.5"/>
<ellipse cx="238" cy="596.6" rx="0.9" ry="2.2" fill="none" stroke="#86c78d" stroke-width="0.5"/>
<ellipse cx="322" cy="596.6" rx="0.9" ry="2.2" fill="none" stroke="#86c78d" stroke-width="0.5"/>
<ellipse cx="324" cy="596.6" rx="0.9" ry="2.2" fill="none" stroke="#86c78d" stroke-width="0.5"/>
<ellipse cx="326" cy="596.6" rx="0.9" ry="2.2" fill="none" stroke="#86c78d" stroke-width="0.5"/>
<ellipse cx="333" cy="596.6" rx="0.9" ry="2.2" fill="none" stroke="#86c78d" stroke-width="0.5"/>
<ellipse cx="335" cy="596.6" rx="0.9" ry="2.2" fill="none" stroke="#86c78d" stroke-width="0.5"/>
<ellipse cx="337" cy="596.6" rx="0.9" ry="2.2" fill="none" stroke="#86c78d" stroke-width="0.5"/>
<ellipse cx="344" cy="596.6" rx="0.9" ry="2.2" fill="none" stroke="#86c78d" stroke-width="0.5"/>
<ellipse cx="346" cy="596.6" rx="0.9" ry="2.2" fill="none" stroke="#86c78d" stroke-width="0.5"/>
<ellipse cx="348" cy="596.6" rx="0.9" ry="2.2" fill="none" stroke="#86c78d" stroke-width="0.5"/>
<ellipse cx="350" cy="596.6" rx="0.9" ry="2.2" fill="none" stroke="#86c78d" stroke-width="0.5"/>
<ellipse cx="356" cy="596.6" rx="0.9" ry="2.2" fill="none" stroke="#86c78d" stroke-width="0.5"/>
<ellipse cx="358" cy="596.6" rx="0.9" ry="2.2" fill="none" stroke="#86c78d" stroke-width="0.5"/>
<ellipse cx="360" cy="596.6" rx="0.9" ry="2.2" fill="none" stroke="#86c78d" stroke-width="0.5"/>
<ellipse cx="362" cy="596.6" rx="0.9" ry="2.2" fill="none" stroke="#86c78d" stroke-width="0.5"/>
<ellipse cx="376" cy="596.6" rx="0.9" ry="2.2" fill="none" stroke="#86c78d" stroke-width="0.5"/>
<ellipse cx="378" cy="596.6" rx="0.9" ry="2.2" fill="none" stroke="#86c78d" stroke-width="0.5"/>
<ellipse cx="380" cy="596.6" rx="0.9" ry="2.2" fill="none" stroke="#86c78d" stroke-width="0.5"/>
<ellipse cx="390" cy="596.6" rx="0.9" ry="2.2" fill="none" stroke="#86c78d" stroke-width="0.5"/>
<ellipse cx="392" cy="596.6" rx="0.9" ry="2.2" fill="none" stroke="#86c78d" stroke-width="0.5"/>
<ellipse cx="394" cy="596.6" rx="0.9" ry="2.2" fill="none" stroke="#86c78d" stroke-width="0.5"/>
<ellipse cx="396" cy="596.6" rx="0.9" ry="2.2" fill="none" stroke="#86c78d" stroke-width="0.5"/>
<ellipse cx="398" cy="596.6" rx="0.9" ry="2.2" fill="none" stroke="#86c78d" stroke-width="0.5"/>
<ellipse cx="400" cy="596.6" rx="0.9" ry="2.2" fill="none" stroke="#86c78d" stroke-width="0.5"/>
<ellipse cx="402" cy="596.6" rx="0.9" ry="2.2" fill="none" stroke="#86c78d" stroke-width="0.5"/>
<ellipse cx="404" cy="596.6" rx="0.9" ry="2.2" fill="none" stroke="#86c78d" stroke-width="0.5"/>
<ellipse cx="406" cy="596.6" rx="0.9" ry="2.2" fill="none" stroke="#86c78d" stroke-width="0.5"/>
<ellipse cx="408" cy="596.6" rx="0.9" ry="2.2" fill="none" stroke="#86c78d" stroke-width="0.5"/>
<ellipse cx="410" cy="596.6" rx="0.9" ry="2.2" fill="none" stroke="#86c78d" stroke-width="0.5"/>
<ellipse cx="418" cy="596.6" rx="0.9" ry="2.2" fill="none" stroke="#86c78d" stroke-width="0.5"/>
<ellipse cx="420" cy="596.6" rx="0.9" ry="2.2" fill="none" stroke="#86c78d" stroke-width="0.5"/>
<ellipse cx="422" cy="596.6" rx="0.9" ry="2.2" fill="none" stroke="#86c78d" stroke-width="0.5"/>
<ellipse cx="452" cy="596.6" rx="0.9" ry="2.2" fill="none" stroke="#86c78d" stroke-width="0.5"/>
<ellipse cx="454" cy="596.6" rx="0.9" ry="2.2" fill="none" stroke="#86c78d" stroke-width="0.5"/>
<ellipse cx="470" cy="596.6" rx="0.9" ry="2.2" fill="none" stroke="#86c78d" stroke-width="0.5"/>
<ellipse cx="472" cy="596.6" rx="0.9" ry="2.2" fill="none" stroke="#86c78d" stroke-width="0.5"/>
<rect x="326.5" y="600.9" width="1.8" height="0.8" fill="#5f9d68" opacity="0.8"/>
<rect x="329.5" y="600.9" width="1.8" height="0.8" fill="#5f9d68" opacity="0.8"/>
<rect x="332.5" y="600.9" width="1.8" height="0.8" fill="#5f9d68" opacity="0.8"/>
<rect x="335.5" y="600.9" width="1.8" height="0.8" fill="#5f9d68" opacity="0.8"/>
<rect x="338.5" y="600.9" width="1.8" height="0.8" fill="#5f9d68" opacity="0.8"/>
<rect x="341.5" y="600.9" width="1.8" height="0.8" fill="#5f9d68" opacity="0.8"/>
<rect x="345" y="600.9" width="1.8" height="0.8" fill="#5f9d68" opacity="0.8"/>
<rect x="348" y="600.9" width="1.8" height="0.8" fill="#5f9d68" opacity="0.8"/>
<rect x="351" y="600.9" width="1.8" height="0.8" fill="#5f9d68" opacity="0.8"/>
<rect x="354" y="600.9" width="1.8" height="0.8" fill="#5f9d68" opacity="0.8"/>
<rect x="357.5" y="600.9" width="1.8" height="0.8" fill="#5f9d68" opacity="0.8"/>
<rect x="361" y="600.9" width="1.8" height="0.8" fill="#5f9d68" opacity="0.8"/>
<rect x="365" y="600.9" width="1.8" height="0.8" fill="#5f9d68" opacity="0.8"/>
<rect x="368" y="600.9" width="1.8" height="0.8" fill="#5f9d68" opacity="0.8"/>
<path d="M477.6 600.5 q2 1.6 4 0" stroke="#4c9556" stroke-width="0.8" fill="none"/>
<path d="M339.3 46.5 L354.7 46.5 L347 57 Z" fill="#f6c83e" stroke="#2a2411" stroke-width="1.2" stroke-linejoin="round"/>
<path d="M341.5 47.6 L352.5 47.6 L350.8 49.8 L343.2 49.8 Z" fill="#fbe48a"/>
<g class="t">
<text x="54.0" y="58.6" font-size="11.6" fill="#c3cbd0" stroke="#c3cbd0" stroke-width="0.45" transform="translate(54.0 0) scale(0.72 1) translate(-54.0 0)">1</text>
<text x="236.4" y="59.0" font-size="9.8" fill="#a6aeb4" stroke="#a6aeb4" stroke-width="0.4" transform="translate(236.4 0) scale(0.7 1) translate(-236.4 0)">2</text>
<text x="419.0" y="59.0" font-size="9.8" fill="#a6aeb4" stroke="#a6aeb4" stroke-width="0.4" transform="translate(419.0 0) scale(0.7 1) translate(-419.0 0)">3</text>
<text x="601.5" y="59.0" font-size="9.8" fill="#a6aeb4" stroke="#a6aeb4" stroke-width="0.4" transform="translate(601.5 0) scale(0.7 1) translate(-601.5 0)">4</text>
<text x="784.0" y="58.6" font-size="11.6" fill="#c3cbd0" stroke="#c3cbd0" stroke-width="0.45" transform="translate(784.0 0) scale(0.72 1) translate(-784.0 0)">5</text>
<text x="966.5" y="59.0" font-size="9.8" fill="#a6aeb4" stroke="#a6aeb4" stroke-width="0.4" transform="translate(966.5 0) scale(0.7 1) translate(-966.5 0)">6</text>
<text x="1148.9" y="59.0" font-size="9.8" fill="#a6aeb4" stroke="#a6aeb4" stroke-width="0.4" transform="translate(1148.9 0) scale(0.7 1) translate(-1148.9 0)">7</text>
</g>
<path d="M140.5 45 L153.7 45 L147.1 52.4 Z" fill="#3a444b"/>
<!-- green tab -->
<path d="M0 63.5 L0 58.6 L18.3 27 Q19.6 24.6 22.4 24.6 L52.7 24.6 L52.7 63.5 Z" fill="#8fd095"/>
<path d="M20 25.3 Q21 24.9 22.4 24.9 L52.7 24.9" fill="none" stroke="#a5dbab" stroke-width="0.7"/>
<path d="M37 38.8 L38.6 38.8 C42.6 38.8 41.4 32 45.4 32 L47.2 32" fill="none" stroke="#bdeac1" stroke-width="1.9" stroke-linecap="round"/>
<path d="M46.6 48.8 L46.6 57.3 L37.6 57.3 Z" fill="#b9e6bd"/>
<!-- scroll chevrons -->
<path d="M63.6 31.2 L60.2 34.6 L63.6 38" fill="none" stroke="#262c31" stroke-width="1.3"/>
<path d="M1247.6 30.8 L1251.4 34.6 L1247.6 38.4" fill="none" stroke="#2a3035" stroke-width="1.3"/>
<rect x="1268.3" y="34" width="2.4" height="1" fill="#3f464c"/>
<path d="M1266.2 55.6 L1269.8 52.2 L1273.4 55.6" fill="none" stroke="#2a3035" stroke-width="1.3"/>
<path d="M1266.2 552.2 L1269.8 555.6 L1273.4 552.2" fill="none" stroke="#2a3035" stroke-width="1.3"/>
<rect x="1269" y="582.6" width="1.6" height="1" fill="#454c52"/>
<!-- window controls -->
<rect x="1226" y="8.6" width="7.6" height="2" rx="0.5" fill="#e2e6ea"/>
<path d="M1246.6 9.6 L1246.6 7.6 L1253 7.6 L1253 14 L1251 14" fill="none" stroke="#cfd4d9" stroke-width="1.3"/>
<rect x="1244.6" y="10.2" width="6.4" height="6.6" fill="none" stroke="#e2e6ea" stroke-width="1.5"/>
<path d="M1263.4 8.4 L1271.6 16.8 M1271.6 8.4 L1263.4 16.8" stroke="#e6eaee" stroke-width="1.7" stroke-linecap="round"/>
<!-- title text -->
<g class="t" font-size="13.6" fill="#d9dee3" stroke="#d9dee3" stroke-width="0.25">
<text x="326.3" y="16.1" textLength="33" lengthAdjust="spacingAndGlyphs">Piano</text>
<text x="364.3" y="16.1" textLength="19" lengthAdjust="spacingAndGlyphs">roll</text>
<text x="387.6" y="16.1" textLength="4" lengthAdjust="spacingAndGlyphs">-</text>
<text x="396.6" y="16.1" textLength="59.2" lengthAdjust="spacingAndGlyphs">PianoOne</text>
<text x="471.8" y="16.1" textLength="47.6" lengthAdjust="spacingAndGlyphs">Velocity</text>
</g>
<path d="M462 8.6 L466.4 12.2 L462 15.8 Z" fill="#6d757b"/>
<path d="M526 8.6 L530.2 12.2 L526 15.8 Z" fill="#6d757b"/>
<!-- wrench -->
<g stroke="#d3d8dd" fill="none" stroke-linecap="round">
<path d="M29.8 18 L35.4 12.6" stroke-width="3.7"/>
<path d="M30.3 17.5 L33 14.9" stroke="#3e464d" stroke-width="1.2"/>
<path d="M41.64 7.36 A4.1 4.1 0 1 0 41.86 12.35" stroke-width="2.5" stroke-linecap="butt"/>
</g>
<!-- magnet -->
<path d="M51.8 18.4 L51.8 11.2 A5.5 5.9 0 0 1 62.8 11.2 L62.8 18.4 L59 18.4 L59 11.6 A1.7 2 0 0 0 55.6 11.6 L55.6 18.4 Z" fill="#7de2a2" stroke="#7de2a2" stroke-width="1" stroke-linejoin="round"/>
<rect x="52.6" y="15.2" width="2.2" height="2.4" fill="#2f8a58"/>
<rect x="59.8" y="15.2" width="2.2" height="2.4" fill="#2f8a58"/>
<!-- menu circle -->
<circle cx="79" cy="12.4" r="6.9" fill="none" stroke="#d3d8dd" stroke-width="1.4"/>
<path d="M76.4 10.2 H81.6 M76.4 12.4 H81.6 M76.4 14.6 H81.6" stroke="#d3d8dd" stroke-width="1.1"/>
<!-- pencil -->
<g transform="translate(109.2 13) rotate(45) scale(0.9)">
<path d="M-9.4 0 L-5.6 -3.6 L7.6 -3.6 Q9.2 -3.6 9.2 -2 L9.2 2 Q9.2 3.6 7.6 3.6 L-5.6 3.6 Z" fill="#6a5420" stroke="#f3c75c" stroke-width="1.4" stroke-linejoin="round"/>
<path d="M-5 -1.2 L8.6 -1.2 M-5 1.2 L8.6 1.2" stroke="#f3c75c" stroke-width="1.1"/>
<path d="M-9.2 0 L-6.6 -2.4 L-6.6 2.4 Z" fill="#f3c75c"/>
</g>
<!-- brush 1 -->
<g fill="#d6dbe0">
<g transform="translate(130 12) rotate(-45) scale(0.9)">
<path d="M-4.3 -7.6 L-2.9 -6.2 L-1.4 -7.6 L0 -6.2 L1.4 -7.6 L2.9 -6.2 L4.3 -7.6 L4.3 0.4 L-4.3 0.4 Z"/>
<rect x="-4.3" y="1.2" width="8.6" height="1.3"/>
<path d="M-4.3 3.3 L4.3 3.3 L1.3 6.6 L1.3 9 L-1.3 9 L-1.3 6.6 Z"/>
<circle cx="0" cy="10" r="2.1"/>
<circle cx="0" cy="10.2" r="0.8" fill="#3e464d"/>
</g>
<path d="M123.4 14 L126.4 16.4 L126.2 19.6 L123.8 19.6 Z"/>
</g>
<!-- brush 2 -->
<g fill="#d6dbe0" transform="translate(22.6 0)">
<g transform="translate(130 12) rotate(-45) scale(0.9)">
<path d="M-4.3 -7.6 L-2.9 -6.2 L-1.4 -7.6 L0 -6.2 L1.4 -7.6 L2.9 -6.2 L4.3 -7.6 L4.3 0.4 L-4.3 0.4 Z"/>
<rect x="-4.3" y="1.2" width="8.6" height="1.3"/>
<path d="M-4.3 3.3 L4.3 3.3 L1.3 6.6 L1.3 9 L-1.3 9 L-1.3 6.6 Z"/>
<circle cx="0" cy="10" r="2.1"/>
<circle cx="0" cy="10.2" r="0.8" fill="#3e464d"/>
</g>
<path d="M123.4 14 L126.4 16.4 L126.2 19.6 L123.8 19.6 Z"/>
<path d="M132.8 7.4 H137.8 M135.3 4.9 V9.9" stroke="#e4e8ec" stroke-width="1.2"/>
</g>
<!-- no-entry -->
<circle cx="174.2" cy="12.6" r="6.2" fill="none" stroke="#d3d8dd" stroke-width="1.6"/>
<path d="M170 16.8 L178.4 8.4" stroke="#d3d8dd" stroke-width="1.6"/>
<!-- mute speaker -->
<path d="M188 9 L191.4 9 L195.8 4.6 L195.8 20 L191.4 16 L188 16 Z" fill="#d6dbe0"/>
<path d="M198.2 9.8 L203 15.2 M203 9.8 L198.2 15.2" stroke="#d6dbe0" stroke-width="1.9"/>
<!-- slice -->
<path d="M210.4 6.4 L218 6.4 L218 14.4 Z" fill="#d6dbe0"/>
<path d="M212.6 7 L217.6 12.2" stroke="#59616a" stroke-width="0.7"/>
<path d="M218.8 6 L222 6 Q225 6.4 225 10 L225 19.8 L222 19.8 Q218.8 19.6 218.8 16.6 Z" fill="#d6dbe0"/>
<path d="M224.6 8 L224.6 19.6" stroke="#c9ae7e" stroke-width="1"/>
<circle cx="222.2" cy="12.2" r="0.9" fill="#4d5a78"/>
<!-- select -->
<g fill="none" stroke="#d6dbe0" stroke-width="1.6" stroke-linecap="round">
<path d="M233.4 10 L233.4 8.6 Q233.4 6.8 235.2 6.8 L237 6.8"/>
<path d="M242 6.8 L243.8 6.8 Q245.6 6.8 245.6 8.6 L245.6 10"/>
<path d="M245.6 15.4 L245.6 17 Q245.6 18.8 243.8 18.8 L242 18.8"/>
<path d="M237 18.8 L235.2 18.8 Q233.4 18.8 233.4 17 L233.4 15.4"/>
</g>
<!-- zoom -->
<circle cx="259.8" cy="11.4" r="5.9" fill="none" stroke="#d6dbe0" stroke-width="1.5"/>
<path d="M264.2 15.8 L267.8 19.4" stroke="#d6dbe0" stroke-width="2.2" stroke-linecap="round"/>
<path d="M257.6 12.6 L261 9.2" stroke="#d6dbe0" stroke-width="1.6" stroke-linecap="round"/>
<!-- speaker bars -->
<path d="M275 9 L278.6 9 L283.4 4.6 L283.4 20 L278.6 16 L275 16 Z" fill="#d6dbe0"/>
<rect x="285.2" y="8.4" width="1.6" height="8.4" fill="#d6dbe0"/>
<rect x="288.2" y="8.4" width="1.6" height="8.4" fill="#d6dbe0"/>
<!-- yellow speaker -->
<path d="M305.2 9.4 L308.6 9.4 L313 5.6 L313 19.4 L308.6 15.6 L305.2 15.6 Z" fill="none" stroke="#f2c050" stroke-width="1.5" stroke-linejoin="round"/>
<path d="M315 8.4 L319.8 12.4 L315 16.4 Z" fill="#f8c24a"/>
<!-- cursor -->
<rect x="0" y="2" width="1.2" height="19.5" fill="#1d4b70"/>
<path d="M1.6 -1 L1.6 22.2 L6.6 18 L10 26.2 L13.4 24.8 L10 16.8 L16.8 16 Z" fill="#ffffff" stroke="#2a2f34" stroke-width="0.8" stroke-linejoin="round"/>

</svg>
</body></html>
